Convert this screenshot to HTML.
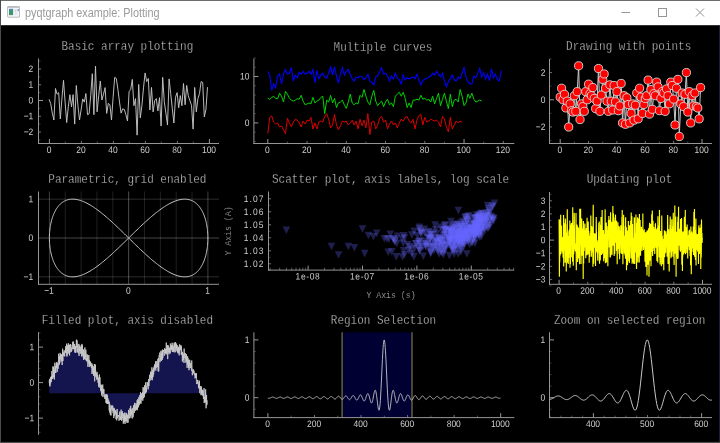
<!DOCTYPE html>
<html lang="en">
<head>
<meta charset="utf-8">
<title>pyqtgraph example: Plotting</title>
<style>
html,body{margin:0;padding:0;background:#000;}
body{width:720px;height:443px;overflow:hidden;position:relative;font-family:"Liberation Sans",sans-serif;}
#win{position:absolute;left:0;top:0;width:720px;height:443px;display:block;will-change:transform;}
.tt{font-family:"Liberation Mono",monospace;font-size:11px;fill:#d6d6d6;text-anchor:middle;stroke:#000;stroke-width:0.3px;}
.tk{font-family:"Liberation Sans",sans-serif;font-size:9.4px;fill:#cecece;}
.al{font-family:"Liberation Mono",monospace;font-size:8.2px;fill:#c4c4c4;text-anchor:middle;stroke:#000;stroke-width:0.22px;}
.cap{font-family:"Liberation Sans",sans-serif;font-size:12px;fill:#9a9a9a;}
</style>
</head>
<body>
<svg id="win" width="720" height="443" viewBox="0 0 720 443">

<rect x="0" y="0" width="720" height="443" fill="#000"/>
<rect x="0" y="0" width="720" height="25.2" fill="#fff"/>
<rect x="0" y="0" width="720" height="0.9" fill="#5c5c5c"/>
<rect x="0" y="0" width="1" height="443" fill="#4a4b4e"/>
<rect x="719" y="26" width="1" height="417" fill="#1c1c3a"/>
<rect x="0" y="441.9" width="720" height="1.1" fill="#4e4e4e"/>
<g>
<rect x="7.5" y="6.8" width="12" height="10.4" rx="0.8" fill="#f3f4f6" stroke="#bcbdc2" stroke-width="1"/>
<rect x="7.2" y="6.3" width="12.6" height="1.5" rx="0.5" fill="#b9bac0"/>
<rect x="9" y="9.2" width="4.1" height="5.9" fill="#3e9474"/>
<rect x="9" y="8.8" width="4.1" height="1" fill="#4f86c4"/>
<rect x="17.5" y="9.1" width="1.5" height="2" fill="#7d9fd6"/>
<rect x="14.4" y="9.4" width="2.4" height="5.4" fill="#e4e8ef"/>
<rect x="15.2" y="10.2" width="0.8" height="0.8" fill="#e9a0a0"/>
<rect x="19" y="16" width="0.8" height="0.8" fill="#6fc08a"/>
</g>
<text x="25" y="16.6" class="cap" textLength="134.5" lengthAdjust="spacingAndGlyphs">pyqtgraph example: Plotting</text>
<line x1="621.5" y1="12.5" x2="630" y2="12.5" stroke="#959595" stroke-width="1"/>
<rect x="658.5" y="8.5" width="8" height="8" fill="none" stroke="#959595" stroke-width="1"/>
<path d="M696 8.5 L704 16.5 M704 8.5 L696 16.5" stroke="#959595" stroke-width="1" fill="none"/>
<text transform="translate(127.4 50.3) scale(1 1.2)" class="tt">Basic array plotting</text>
<line x1="38.5" y1="58.5" x2="38.5" y2="144" stroke="#969696" stroke-width="1" opacity="1"/>
<line x1="38" y1="143.5" x2="219" y2="143.5" stroke="#969696" stroke-width="1" opacity="1"/>
<line x1="49.4" y1="139" x2="49.4" y2="143.5" stroke="#969696" stroke-width="1" opacity="1"/>
<text transform="translate(49 152.9) rotate(0.05) scale(0.9 1.0)" class="tk" text-anchor="middle">0</text>
<line x1="81.4" y1="140.9" x2="81.4" y2="143.5" stroke="#969696" stroke-width="1" opacity="0.75"/>
<text transform="translate(81 152.9) rotate(0.05) scale(0.9 1.0)" class="tk" text-anchor="middle">20</text>
<line x1="113.4" y1="140.9" x2="113.4" y2="143.5" stroke="#969696" stroke-width="1" opacity="0.75"/>
<text transform="translate(113 152.9) rotate(0.05) scale(0.9 1.0)" class="tk" text-anchor="middle">40</text>
<line x1="145.4" y1="140.9" x2="145.4" y2="143.5" stroke="#969696" stroke-width="1" opacity="0.75"/>
<text transform="translate(145 152.9) rotate(0.05) scale(0.9 1.0)" class="tk" text-anchor="middle">60</text>
<line x1="177.4" y1="140.9" x2="177.4" y2="143.5" stroke="#969696" stroke-width="1" opacity="0.75"/>
<text transform="translate(177 152.9) rotate(0.05) scale(0.9 1.0)" class="tk" text-anchor="middle">80</text>
<line x1="209.4" y1="139" x2="209.4" y2="143.5" stroke="#969696" stroke-width="1" opacity="1"/>
<text transform="translate(209 152.9) rotate(0.05) scale(0.9 1.0)" class="tk" text-anchor="middle">100</text>
<line x1="65.4" y1="141.5" x2="65.4" y2="143.5" stroke="#969696" stroke-width="1" opacity="0.5"/>
<line x1="97.4" y1="141.5" x2="97.4" y2="143.5" stroke="#969696" stroke-width="1" opacity="0.5"/>
<line x1="129.4" y1="141.5" x2="129.4" y2="143.5" stroke="#969696" stroke-width="1" opacity="0.5"/>
<line x1="161.4" y1="141.5" x2="161.4" y2="143.5" stroke="#969696" stroke-width="1" opacity="0.5"/>
<line x1="193.4" y1="141.5" x2="193.4" y2="143.5" stroke="#969696" stroke-width="1" opacity="0.5"/>
<line x1="38.5" y1="69" x2="41.1" y2="69" stroke="#969696" stroke-width="1" opacity="0.75"/>
<text transform="translate(33.3 72.1) rotate(0.05) scale(0.9 1.0)" class="tk" text-anchor="end">2</text>
<line x1="38.5" y1="84.75" x2="41.1" y2="84.75" stroke="#969696" stroke-width="1" opacity="0.75"/>
<text transform="translate(33.3 87.85) rotate(0.05) scale(0.9 1.0)" class="tk" text-anchor="end">1</text>
<line x1="38.5" y1="100.5" x2="43" y2="100.5" stroke="#969696" stroke-width="1" opacity="1"/>
<text transform="translate(33.3 103.6) rotate(0.05) scale(0.9 1.0)" class="tk" text-anchor="end">0</text>
<line x1="38.5" y1="116.25" x2="41.1" y2="116.25" stroke="#969696" stroke-width="1" opacity="0.75"/>
<text transform="translate(33.3 119.35) rotate(0.05) scale(0.9 1.0)" class="tk" text-anchor="end">−1</text>
<line x1="38.5" y1="132" x2="41.1" y2="132" stroke="#969696" stroke-width="1" opacity="0.75"/>
<text transform="translate(33.3 135.1) rotate(0.05) scale(0.9 1.0)" class="tk" text-anchor="end">−2</text>
<line x1="38.5" y1="61.12" x2="40.5" y2="61.12" stroke="#969696" stroke-width="1" opacity="0.4"/>
<line x1="38.5" y1="76.88" x2="40.5" y2="76.88" stroke="#969696" stroke-width="1" opacity="0.4"/>
<line x1="38.5" y1="92.62" x2="40.5" y2="92.62" stroke="#969696" stroke-width="1" opacity="0.4"/>
<line x1="38.5" y1="108.38" x2="40.5" y2="108.38" stroke="#969696" stroke-width="1" opacity="0.4"/>
<line x1="38.5" y1="124.12" x2="40.5" y2="124.12" stroke="#969696" stroke-width="1" opacity="0.4"/>
<line x1="38.5" y1="139.88" x2="40.5" y2="139.88" stroke="#969696" stroke-width="1" opacity="0.4"/>
<polyline fill="none" stroke="#c4c4c4" stroke-width="0.95" stroke-linejoin="round" points="49.1,99.24 50.7,103.65 52.3,113.1 53.9,120.03 55.5,88.53 57.1,94.2 58.7,92.62 60.3,118.93 61.9,98.92 63.5,80.34 65.1,102.08 66.7,122.55 68.3,106.8 69.9,94.67 71.5,106.8 73.1,94.67 74.7,124.12 76.3,85.54 77.9,105.22 79.5,120.03 81.1,109.95 82.7,98.92 84.3,102.08 85.9,93.57 87.5,114.67 89.1,113.89 90.7,95.78 92.3,73.72 93.9,114.67 95.5,66.16 97.1,111.84 98.7,95.78 100.3,80.97 101.9,100.03 103.5,94.2 105.1,87.59 106.7,113.41 108.3,103.33 109.9,104.75 111.5,120.03 113.1,97.35 114.7,77.35 116.3,78.45 117.9,89.47 119.5,102.08 121.1,113.1 122.7,108.85 124.3,109.48 125.9,114.67 127.5,120.97 129.1,91.52 130.7,89.47 132.3,79.39 133.9,105.7 135.5,98.61 137.1,135.15 138.7,84.44 140.3,117.83 141.9,105.7 143.5,87.9 145.1,72.94 146.7,81.6 148.3,78.45 149.9,109.95 151.5,87.43 153.1,111.84 154.7,100.66 156.3,98.61 157.9,110.89 159.5,97.67 161.1,126.02 162.7,77.35 164.3,101.76 165.9,113.1 167.5,125.07 169.1,78.92 170.7,93.57 172.3,108.38 173.9,123.02 175.5,97.35 177.1,92.62 178.7,107.75 180.3,95.62 181.9,105.7 183.5,83.49 185.1,104.75 186.7,85.38 188.3,95.78 189.9,100.66 191.5,105.22 193.1,129.16 194.7,87.43 196.3,111.84 197.9,98.61 199.5,93.57 201.1,81.6 202.7,82.39 204.3,116.88 205.9,109.79 207.5,87.11"/>
<text transform="translate(383 50.6) scale(1 1.2)" class="tt">Multiple curves</text>
<line x1="253.9" y1="58.5" x2="253.9" y2="144" stroke="#969696" stroke-width="1" opacity="1"/>
<line x1="253.4" y1="143.5" x2="514.3" y2="143.5" stroke="#969696" stroke-width="1" opacity="1"/>
<line x1="267.8" y1="139" x2="267.8" y2="143.5" stroke="#969696" stroke-width="1" opacity="1"/>
<text transform="translate(267.4 152.9) rotate(0.05) scale(0.9 1.0)" class="tk" text-anchor="middle">0</text>
<line x1="307.05" y1="140.9" x2="307.05" y2="143.5" stroke="#969696" stroke-width="1" opacity="0.75"/>
<text transform="translate(306.65 152.9) rotate(0.05) scale(0.9 1.0)" class="tk" text-anchor="middle">20</text>
<line x1="346.3" y1="140.9" x2="346.3" y2="143.5" stroke="#969696" stroke-width="1" opacity="0.75"/>
<text transform="translate(345.9 152.9) rotate(0.05) scale(0.9 1.0)" class="tk" text-anchor="middle">40</text>
<line x1="385.55" y1="140.9" x2="385.55" y2="143.5" stroke="#969696" stroke-width="1" opacity="0.75"/>
<text transform="translate(385.15 152.9) rotate(0.05) scale(0.9 1.0)" class="tk" text-anchor="middle">60</text>
<line x1="424.8" y1="140.9" x2="424.8" y2="143.5" stroke="#969696" stroke-width="1" opacity="0.75"/>
<text transform="translate(424.4 152.9) rotate(0.05) scale(0.9 1.0)" class="tk" text-anchor="middle">80</text>
<line x1="464.05" y1="139" x2="464.05" y2="143.5" stroke="#969696" stroke-width="1" opacity="1"/>
<text transform="translate(463.65 152.9) rotate(0.05) scale(0.9 1.0)" class="tk" text-anchor="middle">100</text>
<line x1="503.3" y1="140.9" x2="503.3" y2="143.5" stroke="#969696" stroke-width="1" opacity="0.75"/>
<text transform="translate(502.9 152.9) rotate(0.05) scale(0.9 1.0)" class="tk" text-anchor="middle">120</text>
<line x1="287.43" y1="141.5" x2="287.43" y2="143.5" stroke="#969696" stroke-width="1" opacity="0.5"/>
<line x1="326.68" y1="141.5" x2="326.68" y2="143.5" stroke="#969696" stroke-width="1" opacity="0.5"/>
<line x1="365.93" y1="141.5" x2="365.93" y2="143.5" stroke="#969696" stroke-width="1" opacity="0.5"/>
<line x1="405.18" y1="141.5" x2="405.18" y2="143.5" stroke="#969696" stroke-width="1" opacity="0.5"/>
<line x1="444.43" y1="141.5" x2="444.43" y2="143.5" stroke="#969696" stroke-width="1" opacity="0.5"/>
<line x1="483.68" y1="141.5" x2="483.68" y2="143.5" stroke="#969696" stroke-width="1" opacity="0.5"/>
<line x1="253.9" y1="76.5" x2="258.4" y2="76.5" stroke="#969696" stroke-width="1" opacity="1"/>
<text transform="translate(249.5 79.6) rotate(0.05) scale(0.9 1.0)" class="tk" text-anchor="end">10</text>
<line x1="253.9" y1="122.9" x2="258.4" y2="122.9" stroke="#969696" stroke-width="1" opacity="1"/>
<text transform="translate(249.5 126) rotate(0.05) scale(0.9 1.0)" class="tk" text-anchor="end">0</text>
<line x1="253.9" y1="141.46" x2="255.9" y2="141.46" stroke="#969696" stroke-width="1" opacity="0.4"/>
<line x1="253.9" y1="132.18" x2="255.9" y2="132.18" stroke="#969696" stroke-width="1" opacity="0.4"/>
<line x1="253.9" y1="113.62" x2="255.9" y2="113.62" stroke="#969696" stroke-width="1" opacity="0.4"/>
<line x1="253.9" y1="104.34" x2="255.9" y2="104.34" stroke="#969696" stroke-width="1" opacity="0.4"/>
<line x1="253.9" y1="95.06" x2="255.9" y2="95.06" stroke="#969696" stroke-width="1" opacity="0.4"/>
<line x1="253.9" y1="85.78" x2="255.9" y2="85.78" stroke="#969696" stroke-width="1" opacity="0.4"/>
<line x1="253.9" y1="67.22" x2="255.9" y2="67.22" stroke="#969696" stroke-width="1" opacity="0.4"/>
<line x1="253.9" y1="57.94" x2="255.9" y2="57.94" stroke="#969696" stroke-width="1" opacity="0.4"/>
<polyline fill="none" stroke="#e80000" stroke-width="0.95" points="267.8,133.57 269.76,117.33 271.73,115.94 273.69,122.11 275.65,124.06 277.61,122.9 279.57,126.89 281.54,125.96 283.5,129.86 285.46,133.57 287.43,118.26 289.39,122.9 291.35,126.89 293.31,122.11 295.28,119.19 297.24,120.12 299.2,122.9 301.16,126.89 303.12,121.04 305.09,124.06 307.05,120.12 309.01,121.04 310.98,117.33 312.94,128.93 314.9,122.9 316.86,128.93 318.82,122.11 320.79,121.04 322.75,122.11 324.71,116.4 326.68,113.62 328.64,119.19 330.6,127.86 332.56,124.99 334.52,114.55 336.49,124.99 338.45,129.86 340.41,125.96 342.38,121.04 344.34,122.11 346.3,121.04 348.26,124.99 350.23,122.9 352.19,120.12 354.15,124.99 356.11,121.04 358.07,128.93 360.04,119.19 362,125.96 363.96,120.12 365.93,127.86 367.89,113.62 369.85,134.5 371.81,122.11 373.77,121.04 375.74,128.93 377.7,124.99 379.66,118.26 381.62,116.4 383.59,122.11 385.55,120.12 387.51,128.93 389.48,124.06 391.44,121.04 393.4,124.99 395.36,122.9 397.33,127.86 399.29,122.9 401.25,119.19 403.21,121.04 405.18,117.33 407.14,116.4 409.1,121.04 411.06,122.9 413.02,119.19 414.99,128.93 416.95,120.12 418.91,115.48 420.88,114.55 422.84,124.99 424.8,117.33 426.76,122.11 428.73,121.04 430.69,119.19 432.65,120.12 434.61,121.04 436.58,120.12 438.54,122.11 440.5,126.89 442.46,116.4 444.43,119.19 446.39,126.89 448.35,131.72 450.31,117.33 452.27,128.93 454.24,124.99 456.2,121.04 458.16,122.9 460.12,121.04 462.09,122.11"/>
<polyline fill="none" stroke="#00dc00" stroke-width="0.95" points="267.8,98.31 269.76,99.24 271.73,97.38 273.69,96.45 275.65,98.31 277.61,98.77 279.57,93.2 281.54,96.22 283.5,102.02 285.46,91.35 287.43,94.13 289.39,98.31 291.35,100.16 293.31,101.09 295.28,100.16 297.24,98.77 299.2,99.24 301.16,95.29 303.12,101.09 305.09,104.8 307.05,103.88 309.01,102.95 310.98,103.88 312.94,97.38 314.9,102.95 316.86,101.09 318.82,100.16 320.79,97.61 322.75,96.22 324.71,113.62 326.68,100.16 328.64,102.02 330.6,95.29 332.56,102.95 334.52,98.31 336.49,107.59 338.45,102.95 340.41,102.02 342.38,100.16 344.34,104.8 346.3,108.52 348.26,102.02 350.23,94.13 352.19,102.95 354.15,104.8 356.11,102.95 358.07,103.88 360.04,95.29 362,97.38 363.96,89.49 365.93,96.22 367.89,102.02 369.85,104.8 371.81,96.22 373.77,90.42 375.74,101.09 377.7,105.73 379.66,102.95 381.62,101.09 383.59,106.66 385.55,102.02 387.51,99.24 389.48,104.8 391.44,102.95 393.4,106.66 395.36,96.22 397.33,94.13 399.29,92.28 401.25,96.22 403.21,92.28 405.18,98.31 407.14,107.59 409.1,102.95 411.06,107.59 413.02,100.16 414.99,100.16 416.95,99.24 418.91,100.16 420.88,95.29 422.84,99.24 424.8,98.31 426.76,100.16 428.73,99.24 430.69,102.02 432.65,96.22 434.61,103.88 436.58,98.31 438.54,93.2 440.5,105.73 442.46,99.24 444.43,93.2 446.39,101.09 448.35,108.52 450.31,94.13 452.27,106.66 454.24,100.16 456.2,99.24 458.16,102.02 460.12,89.49 462.09,96.22 464.05,105.73 466.01,102.95 467.98,94.13 469.94,98.31 471.9,93.2 473.86,99.24 475.82,102.02 477.79,101.09 479.75,100.16 481.71,101.09"/>
<polyline fill="none" stroke="#00f" stroke-width="1.1" points="267.8,71.4 269.76,75.11 271.73,90.42 273.69,83.92 275.65,87.64 277.61,76.04 279.57,74.18 281.54,83.92 283.5,74.18 285.46,69.54 287.43,74.18 289.39,73.25 291.35,67.68 293.31,81.14 295.28,75.11 297.24,77.89 299.2,72.32 301.16,74.18 303.12,71.4 305.09,74.18 307.05,73.25 309.01,71.4 310.98,74.18 312.94,69.54 314.9,83 316.86,70.47 318.82,78.82 320.79,75.11 322.75,73.25 324.71,76.96 326.68,77.89 328.64,73.25 330.6,66.76 332.56,75.11 334.52,66.76 336.49,76.04 338.45,83 340.41,74.18 342.38,67.68 344.34,75.11 346.3,71.4 348.26,69.54 350.23,74.18 352.19,78.82 354.15,81.14 356.11,76.96 358.07,77.89 360.04,76.04 362,76.96 363.96,79.75 365.93,77.89 367.89,74.18 369.85,81.14 371.81,82.07 373.77,84.85 375.74,76.96 377.7,76.04 379.66,71.86 381.62,67.68 383.59,74.18 385.55,73.25 387.51,76.04 389.48,80.91 391.44,76.04 393.4,78.82 395.36,73.25 397.33,77.89 399.29,79.75 401.25,83.92 403.21,75.11 405.18,79.75 407.14,77.89 409.1,78.82 411.06,77.89 413.02,76.96 414.99,78.82 416.95,74.18 418.91,79.75 420.88,84.85 422.84,80.91 424.8,78.82 426.76,78.82 428.73,76.96 430.69,76.04 432.65,73.25 434.61,75.11 436.58,71.4 438.54,74.18 440.5,76.96 442.46,73.25 444.43,80.91 446.39,86.71 448.35,81.84 450.31,78.82 452.27,75.11 454.24,79.75 456.2,80.91 458.16,76.96 460.12,78.82 462.09,73.25 464.05,67.68 466.01,76.96 467.98,81.84 469.94,83.92 471.9,83.92 473.86,76.04 475.82,77.89 477.79,73.25 479.75,68.61 481.71,76.96 483.68,72.32 485.64,78.82 487.6,74.18 489.56,80.91 491.52,68.61 493.49,77.89 495.45,74.18 497.41,79.75 499.38,80.91 501.34,70.47"/>
<text transform="translate(628.7 50.3) scale(1 1.2)" class="tt">Drawing with points</text>
<line x1="549.5" y1="59" x2="549.5" y2="144" stroke="#969696" stroke-width="1" opacity="1"/>
<line x1="549" y1="143.5" x2="712" y2="143.5" stroke="#969696" stroke-width="1" opacity="1"/>
<line x1="560.2" y1="139" x2="560.2" y2="143.5" stroke="#969696" stroke-width="1" opacity="1"/>
<text transform="translate(559.8 152.9) rotate(0.05) scale(0.9 1.0)" class="tk" text-anchor="middle">0</text>
<line x1="588.56" y1="140.9" x2="588.56" y2="143.5" stroke="#969696" stroke-width="1" opacity="0.75"/>
<text transform="translate(588.16 152.9) rotate(0.05) scale(0.9 1.0)" class="tk" text-anchor="middle">20</text>
<line x1="616.92" y1="140.9" x2="616.92" y2="143.5" stroke="#969696" stroke-width="1" opacity="0.75"/>
<text transform="translate(616.52 152.9) rotate(0.05) scale(0.9 1.0)" class="tk" text-anchor="middle">40</text>
<line x1="645.28" y1="140.9" x2="645.28" y2="143.5" stroke="#969696" stroke-width="1" opacity="0.75"/>
<text transform="translate(644.88 152.9) rotate(0.05) scale(0.9 1.0)" class="tk" text-anchor="middle">60</text>
<line x1="673.64" y1="140.9" x2="673.64" y2="143.5" stroke="#969696" stroke-width="1" opacity="0.75"/>
<text transform="translate(673.24 152.9) rotate(0.05) scale(0.9 1.0)" class="tk" text-anchor="middle">80</text>
<line x1="702" y1="139" x2="702" y2="143.5" stroke="#969696" stroke-width="1" opacity="1"/>
<text transform="translate(701.6 152.9) rotate(0.05) scale(0.9 1.0)" class="tk" text-anchor="middle">100</text>
<line x1="574.38" y1="141.5" x2="574.38" y2="143.5" stroke="#969696" stroke-width="1" opacity="0.5"/>
<line x1="602.74" y1="141.5" x2="602.74" y2="143.5" stroke="#969696" stroke-width="1" opacity="0.5"/>
<line x1="631.1" y1="141.5" x2="631.1" y2="143.5" stroke="#969696" stroke-width="1" opacity="0.5"/>
<line x1="659.46" y1="141.5" x2="659.46" y2="143.5" stroke="#969696" stroke-width="1" opacity="0.5"/>
<line x1="687.82" y1="141.5" x2="687.82" y2="143.5" stroke="#969696" stroke-width="1" opacity="0.5"/>
<line x1="549.5" y1="72.6" x2="552.1" y2="72.6" stroke="#969696" stroke-width="1" opacity="0.75"/>
<text transform="translate(545.4 75.7) rotate(0.05) scale(0.9 1.0)" class="tk" text-anchor="end">2</text>
<line x1="549.5" y1="99.8" x2="554" y2="99.8" stroke="#969696" stroke-width="1" opacity="1"/>
<text transform="translate(545.4 102.9) rotate(0.05) scale(0.9 1.0)" class="tk" text-anchor="end">0</text>
<line x1="549.5" y1="127" x2="552.1" y2="127" stroke="#969696" stroke-width="1" opacity="0.75"/>
<text transform="translate(545.4 130.1) rotate(0.05) scale(0.9 1.0)" class="tk" text-anchor="end">−2</text>
<line x1="549.5" y1="140.6" x2="551.5" y2="140.6" stroke="#969696" stroke-width="1" opacity="0.4"/>
<line x1="549.5" y1="113.4" x2="551.5" y2="113.4" stroke="#969696" stroke-width="1" opacity="0.4"/>
<line x1="549.5" y1="86.2" x2="551.5" y2="86.2" stroke="#969696" stroke-width="1" opacity="0.4"/>
<line x1="549.5" y1="59" x2="551.5" y2="59" stroke="#969696" stroke-width="1" opacity="0.4"/>
<polyline fill="none" stroke="#c8c8c8" stroke-width="1" points="560.2,97.08 561.62,88.24 563.04,99.8 564.45,94.36 565.87,107.96 567.29,101.16 568.71,127 570.13,103.88 571.54,110.68 572.96,112.04 574.38,95.72 575.8,111.36 577.22,91.64 578.63,65.8 580.05,119.52 581.47,103.88 582.89,106.6 584.31,111.36 585.72,91.64 587.14,99.8 588.56,84.16 589.98,93.68 591.4,95.72 592.81,87.56 594.23,98.44 595.65,108.64 597.07,101.16 598.49,68.52 599.9,111.36 601.32,95.04 602.74,79.4 604.16,73.96 605.58,88.24 606.99,101.16 608.41,111.36 609.83,84.84 611.25,101.16 612.67,110 614.08,85.52 615.5,101.84 616.92,91.64 618.34,110.68 619.76,105.92 621.17,83.48 622.59,122.92 624.01,95.72 625.43,124.28 626.85,97.76 628.26,104.56 629.68,122.92 631.1,113.4 632.52,103.88 633.94,120.2 635.35,105.24 636.77,93 638.19,118.84 639.61,88.24 641.03,97.08 642.44,113.4 643.86,104.56 645.28,98.44 646.7,95.72 648.12,80.08 649.53,114.08 650.95,89.6 652.37,109.32 653.79,93.68 655.21,95.72 656.62,82.12 658.04,86.88 659.46,110.68 660.88,98.44 662.3,91.64 663.71,93 665.13,111.36 666.55,88.92 667.97,95.72 669.39,103.88 670.8,82.12 672.22,85.52 673.64,99.12 675.06,124.96 676.48,88.24 677.89,79.4 679.31,136.52 680.73,103.88 682.15,93 683.57,106.6 684.98,94.36 686.4,72.6 687.82,112.04 689.24,91.64 690.66,122.92 692.07,95.72 693.49,105.92 694.91,93 696.33,106.6 697.75,107.96 699.16,118.84 700.58,87.56"/>
<g fill="#f00" stroke="#d8d8d8" stroke-width="0.9">
<circle cx="560.2" cy="97.08" r="4.1"/>
<circle cx="561.62" cy="88.24" r="4.1"/>
<circle cx="563.04" cy="99.8" r="4.1"/>
<circle cx="564.45" cy="94.36" r="4.1"/>
<circle cx="565.87" cy="107.96" r="4.1"/>
<circle cx="567.29" cy="101.16" r="4.1"/>
<circle cx="568.71" cy="127" r="4.1"/>
<circle cx="570.13" cy="103.88" r="4.1"/>
<circle cx="571.54" cy="110.68" r="4.1"/>
<circle cx="572.96" cy="112.04" r="4.1"/>
<circle cx="574.38" cy="95.72" r="4.1"/>
<circle cx="575.8" cy="111.36" r="4.1"/>
<circle cx="577.22" cy="91.64" r="4.1"/>
<circle cx="578.63" cy="65.8" r="4.1"/>
<circle cx="580.05" cy="119.52" r="4.1"/>
<circle cx="581.47" cy="103.88" r="4.1"/>
<circle cx="582.89" cy="106.6" r="4.1"/>
<circle cx="584.31" cy="111.36" r="4.1"/>
<circle cx="585.72" cy="91.64" r="4.1"/>
<circle cx="587.14" cy="99.8" r="4.1"/>
<circle cx="588.56" cy="84.16" r="4.1"/>
<circle cx="589.98" cy="93.68" r="4.1"/>
<circle cx="591.4" cy="95.72" r="4.1"/>
<circle cx="592.81" cy="87.56" r="4.1"/>
<circle cx="594.23" cy="98.44" r="4.1"/>
<circle cx="595.65" cy="108.64" r="4.1"/>
<circle cx="597.07" cy="101.16" r="4.1"/>
<circle cx="598.49" cy="68.52" r="4.1"/>
<circle cx="599.9" cy="111.36" r="4.1"/>
<circle cx="601.32" cy="95.04" r="4.1"/>
<circle cx="602.74" cy="79.4" r="4.1"/>
<circle cx="604.16" cy="73.96" r="4.1"/>
<circle cx="605.58" cy="88.24" r="4.1"/>
<circle cx="606.99" cy="101.16" r="4.1"/>
<circle cx="608.41" cy="111.36" r="4.1"/>
<circle cx="609.83" cy="84.84" r="4.1"/>
<circle cx="611.25" cy="101.16" r="4.1"/>
<circle cx="612.67" cy="110" r="4.1"/>
<circle cx="614.08" cy="85.52" r="4.1"/>
<circle cx="615.5" cy="101.84" r="4.1"/>
<circle cx="616.92" cy="91.64" r="4.1"/>
<circle cx="618.34" cy="110.68" r="4.1"/>
<circle cx="619.76" cy="105.92" r="4.1"/>
<circle cx="621.17" cy="83.48" r="4.1"/>
<circle cx="622.59" cy="122.92" r="4.1"/>
<circle cx="624.01" cy="95.72" r="4.1"/>
<circle cx="625.43" cy="124.28" r="4.1"/>
<circle cx="626.85" cy="97.76" r="4.1"/>
<circle cx="628.26" cy="104.56" r="4.1"/>
<circle cx="629.68" cy="122.92" r="4.1"/>
<circle cx="631.1" cy="113.4" r="4.1"/>
<circle cx="632.52" cy="103.88" r="4.1"/>
<circle cx="633.94" cy="120.2" r="4.1"/>
<circle cx="635.35" cy="105.24" r="4.1"/>
<circle cx="636.77" cy="93" r="4.1"/>
<circle cx="638.19" cy="118.84" r="4.1"/>
<circle cx="639.61" cy="88.24" r="4.1"/>
<circle cx="641.03" cy="97.08" r="4.1"/>
<circle cx="642.44" cy="113.4" r="4.1"/>
<circle cx="643.86" cy="104.56" r="4.1"/>
<circle cx="645.28" cy="98.44" r="4.1"/>
<circle cx="646.7" cy="95.72" r="4.1"/>
<circle cx="648.12" cy="80.08" r="4.1"/>
<circle cx="649.53" cy="114.08" r="4.1"/>
<circle cx="650.95" cy="89.6" r="4.1"/>
<circle cx="652.37" cy="109.32" r="4.1"/>
<circle cx="653.79" cy="93.68" r="4.1"/>
<circle cx="655.21" cy="95.72" r="4.1"/>
<circle cx="656.62" cy="82.12" r="4.1"/>
<circle cx="658.04" cy="86.88" r="4.1"/>
<circle cx="659.46" cy="110.68" r="4.1"/>
<circle cx="660.88" cy="98.44" r="4.1"/>
<circle cx="662.3" cy="91.64" r="4.1"/>
<circle cx="663.71" cy="93" r="4.1"/>
<circle cx="665.13" cy="111.36" r="4.1"/>
<circle cx="666.55" cy="88.92" r="4.1"/>
<circle cx="667.97" cy="95.72" r="4.1"/>
<circle cx="669.39" cy="103.88" r="4.1"/>
<circle cx="670.8" cy="82.12" r="4.1"/>
<circle cx="672.22" cy="85.52" r="4.1"/>
<circle cx="673.64" cy="99.12" r="4.1"/>
<circle cx="675.06" cy="124.96" r="4.1"/>
<circle cx="676.48" cy="88.24" r="4.1"/>
<circle cx="677.89" cy="79.4" r="4.1"/>
<circle cx="679.31" cy="136.52" r="4.1"/>
<circle cx="680.73" cy="103.88" r="4.1"/>
<circle cx="682.15" cy="93" r="4.1"/>
<circle cx="683.57" cy="106.6" r="4.1"/>
<circle cx="684.98" cy="94.36" r="4.1"/>
<circle cx="686.4" cy="72.6" r="4.1"/>
<circle cx="687.82" cy="112.04" r="4.1"/>
<circle cx="689.24" cy="91.64" r="4.1"/>
<circle cx="690.66" cy="122.92" r="4.1"/>
<circle cx="692.07" cy="95.72" r="4.1"/>
<circle cx="693.49" cy="105.92" r="4.1"/>
<circle cx="694.91" cy="93" r="4.1"/>
<circle cx="696.33" cy="106.6" r="4.1"/>
<circle cx="697.75" cy="107.96" r="4.1"/>
<circle cx="699.16" cy="118.84" r="4.1"/>
<circle cx="700.58" cy="87.56" r="4.1"/>
</g>
<text transform="translate(127.4 182.7) scale(1 1.2)" class="tt">Parametric, grid enabled</text>
<line x1="65.25" y1="191.5" x2="65.25" y2="284.3" stroke="#fff" stroke-width="1" opacity="0.12"/>
<line x1="81.1" y1="191.5" x2="81.1" y2="284.3" stroke="#fff" stroke-width="1" opacity="0.12"/>
<line x1="96.95" y1="191.5" x2="96.95" y2="284.3" stroke="#fff" stroke-width="1" opacity="0.12"/>
<line x1="112.8" y1="191.5" x2="112.8" y2="284.3" stroke="#fff" stroke-width="1" opacity="0.12"/>
<line x1="144.5" y1="191.5" x2="144.5" y2="284.3" stroke="#fff" stroke-width="1" opacity="0.12"/>
<line x1="160.35" y1="191.5" x2="160.35" y2="284.3" stroke="#fff" stroke-width="1" opacity="0.12"/>
<line x1="176.2" y1="191.5" x2="176.2" y2="284.3" stroke="#fff" stroke-width="1" opacity="0.12"/>
<line x1="192.05" y1="191.5" x2="192.05" y2="284.3" stroke="#fff" stroke-width="1" opacity="0.12"/>
<line x1="49.4" y1="191.5" x2="49.4" y2="284.3" stroke="#fff" stroke-width="1" opacity="0.24"/>
<line x1="128.65" y1="191.5" x2="128.65" y2="284.3" stroke="#fff" stroke-width="1" opacity="0.3"/>
<line x1="207.9" y1="191.5" x2="207.9" y2="284.3" stroke="#fff" stroke-width="1" opacity="0.24"/>
<line x1="38.5" y1="276.85" x2="219" y2="276.85" stroke="#fff" stroke-width="1" opacity="0.17"/>
<line x1="38.5" y1="238" x2="219" y2="238" stroke="#fff" stroke-width="1" opacity="0.27"/>
<line x1="38.5" y1="199.15" x2="219" y2="199.15" stroke="#fff" stroke-width="1" opacity="0.17"/>
<line x1="38.5" y1="276.85" x2="219" y2="276.85" stroke="#fff" stroke-width="1" opacity="0.0"/>
<line x1="38.5" y1="199.15" x2="219" y2="199.15" stroke="#fff" stroke-width="1" opacity="0.0"/>
<line x1="38.5" y1="191.5" x2="38.5" y2="284.8" stroke="#969696" stroke-width="1" opacity="1"/>
<line x1="38" y1="284.3" x2="219" y2="284.3" stroke="#969696" stroke-width="1" opacity="1"/>
<text transform="translate(49 293.7) rotate(0.05) scale(0.9 1.0)" class="tk" text-anchor="middle">−1</text>
<text transform="translate(128.25 293.7) rotate(0.05) scale(0.9 1.0)" class="tk" text-anchor="middle">0</text>
<text transform="translate(207.5 293.7) rotate(0.05) scale(0.9 1.0)" class="tk" text-anchor="middle">1</text>
<text transform="translate(33.2 202.25) rotate(0.05) scale(0.9 1.0)" class="tk" text-anchor="end">1</text>
<text transform="translate(33.2 241.1) rotate(0.05) scale(0.9 1.0)" class="tk" text-anchor="end">0</text>
<text transform="translate(33.2 279.95) rotate(0.05) scale(0.9 1.0)" class="tk" text-anchor="end">−1</text>
<polyline fill="none" stroke="#c8c8c8" stroke-width="1" points="207.9,238 207.89,236.78 207.86,235.55 207.81,234.33 207.74,233.12 207.65,231.91 207.55,230.7 207.42,229.5 207.27,228.31 207.11,227.13 206.92,225.97 206.71,224.81 206.49,223.66 206.25,222.53 205.98,221.42 205.7,220.32 205.4,219.24 205.08,218.18 204.74,217.14 204.38,216.12 204,215.12 203.61,214.14 203.19,213.18 202.76,212.26 202.31,211.35 201.84,210.47 201.35,209.63 200.84,208.8 200.32,208.01 199.78,207.25 199.22,206.52 198.64,205.81 198.05,205.15 197.44,204.51 196.81,203.91 196.16,203.34 195.5,202.8 194.82,202.3 194.13,201.84 193.42,201.41 192.69,201.01 191.95,200.66 191.19,200.34 190.42,200.06 189.63,199.81 188.82,199.61 188,199.44 187.17,199.31 186.32,199.22 185.46,199.16 184.58,199.15 183.69,199.17 182.78,199.24 181.86,199.34 180.93,199.48 179.99,199.65 179.03,199.87 178.06,200.12 177.08,200.42 176.09,200.74 175.08,201.11 174.06,201.51 173.03,201.95 172,202.42 170.95,202.93 169.88,203.48 168.81,204.05 167.73,204.66 166.64,205.31 165.54,205.99 164.43,206.7 163.32,207.44 162.19,208.21 161.05,209.01 159.91,209.84 158.76,210.69 157.6,211.58 156.44,212.49 155.27,213.42 154.09,214.38 152.9,215.36 151.71,216.37 150.51,217.4 149.31,218.44 148.1,219.51 146.89,220.59 145.68,221.7 144.46,222.82 143.23,223.95 142,225.1 140.77,226.26 139.54,227.43 138.3,228.61 137.06,229.8 135.82,231 134.57,232.21 133.33,233.42 132.08,234.64 130.83,235.86 129.59,237.08 128.34,238.31 127.09,239.53 125.84,240.75 124.6,241.97 123.35,243.18 122.11,244.39 120.86,245.6 119.62,246.79 118.38,247.98 117.15,249.16 115.91,250.32 114.68,251.48 113.46,252.62 112.23,253.75 111.02,254.86 109.8,255.95 108.59,257.03 107.39,258.08 106.19,259.12 104.99,260.14 103.8,261.13 102.62,262.1 101.45,263.05 100.28,263.97 99.12,264.87 97.96,265.74 96.82,266.58 95.68,267.4 94.55,268.18 93.42,268.94 92.31,269.66 91.21,270.36 90.11,271.02 89.03,271.65 87.95,272.24 86.88,272.8 85.83,273.33 84.78,273.82 83.75,274.28 82.73,274.7 81.72,275.08 80.72,275.43 79.73,275.74 78.75,276.01 77.79,276.24 76.84,276.44 75.9,276.6 74.98,276.72 74.06,276.8 73.17,276.84 72.28,276.85 71.41,276.81 70.56,276.74 69.71,276.63 68.89,276.48 68.07,276.29 67.28,276.07 66.5,275.81 65.73,275.51 64.98,275.17 64.24,274.79 63.52,274.38 62.82,273.94 62.13,273.45 61.46,272.94 60.81,272.38 60.17,271.8 59.55,271.18 58.95,270.52 58.37,269.84 57.8,269.12 57.25,268.37 56.72,267.6 56.2,266.79 55.7,265.95 55.23,265.09 54.76,264.2 54.32,263.28 53.9,262.34 53.49,261.38 53.11,260.39 52.74,259.38 52.39,258.34 52.06,257.29 51.75,256.22 51.46,255.13 51.18,254.02 50.93,252.9 50.7,251.77 50.48,250.61 50.29,249.45 50.11,248.28 49.95,247.09 49.81,245.9 49.7,244.7 49.6,243.49 49.52,242.27 49.46,241.06 49.42,239.83 49.4,238.61 49.4,237.39 49.42,236.17 49.46,234.94 49.52,233.73 49.6,232.51 49.7,231.3 49.81,230.1 49.95,228.91 50.11,227.72 50.29,226.55 50.48,225.39 50.7,224.23 50.93,223.1 51.18,221.98 51.46,220.87 51.75,219.78 52.06,218.71 52.39,217.66 52.74,216.62 53.11,215.61 53.49,214.62 53.9,213.66 54.32,212.72 54.76,211.8 55.23,210.91 55.7,210.05 56.2,209.21 56.72,208.4 57.25,207.63 57.8,206.88 58.37,206.16 58.95,205.48 59.55,204.82 60.17,204.2 60.81,203.62 61.46,203.06 62.13,202.55 62.82,202.06 63.52,201.62 64.24,201.21 64.98,200.83 65.73,200.49 66.5,200.19 67.28,199.93 68.07,199.71 68.89,199.52 69.71,199.37 70.56,199.26 71.41,199.19 72.28,199.15 73.17,199.16 74.06,199.2 74.98,199.28 75.9,199.4 76.84,199.56 77.79,199.76 78.75,199.99 79.73,200.26 80.72,200.57 81.72,200.92 82.73,201.3 83.75,201.72 84.78,202.18 85.83,202.67 86.88,203.2 87.95,203.76 89.02,204.35 90.11,204.98 91.21,205.64 92.31,206.34 93.42,207.06 94.55,207.82 95.68,208.6 96.82,209.42 97.96,210.26 99.12,211.13 100.28,212.03 101.45,212.95 102.62,213.9 103.8,214.87 104.99,215.86 106.19,216.88 107.39,217.92 108.59,218.97 109.8,220.05 111.02,221.14 112.23,222.25 113.46,223.38 114.68,224.52 115.91,225.68 117.15,226.84 118.38,228.02 119.62,229.21 120.86,230.4 122.11,231.61 123.35,232.82 124.6,234.03 125.84,235.25 127.09,236.47 128.34,237.69 129.59,238.92 130.83,240.14 132.08,241.36 133.33,242.58 134.57,243.79 135.82,245 137.06,246.2 138.3,247.39 139.54,248.57 140.77,249.74 142,250.9 143.23,252.05 144.46,253.18 145.68,254.3 146.89,255.41 148.1,256.49 149.31,257.56 150.51,258.6 151.71,259.63 152.9,260.64 154.09,261.62 155.27,262.58 156.44,263.51 157.6,264.42 158.76,265.31 159.91,266.16 161.05,266.99 162.19,267.79 163.32,268.56 164.43,269.3 165.54,270.01 166.64,270.69 167.73,271.34 168.81,271.95 169.88,272.52 170.95,273.07 172,273.58 173.03,274.05 174.06,274.49 175.08,274.89 176.09,275.26 177.08,275.58 178.06,275.88 179.03,276.13 179.99,276.35 180.93,276.52 181.86,276.66 182.78,276.76 183.69,276.83 184.58,276.85 185.46,276.84 186.32,276.78 187.17,276.69 188,276.56 188.82,276.39 189.63,276.19 190.42,275.94 191.19,275.66 191.95,275.34 192.69,274.99 193.42,274.59 194.13,274.16 194.82,273.7 195.5,273.2 196.16,272.66 196.81,272.09 197.44,271.49 198.05,270.85 198.64,270.19 199.22,269.48 199.78,268.75 200.32,267.99 200.84,267.2 201.35,266.37 201.84,265.53 202.31,264.65 202.76,263.74 203.19,262.82 203.61,261.86 204,260.88 204.38,259.88 204.74,258.86 205.08,257.82 205.4,256.76 205.7,255.68 205.98,254.58 206.25,253.47 206.49,252.34 206.71,251.19 206.92,250.03 207.11,248.87 207.27,247.69 207.42,246.5 207.55,245.3 207.65,244.09 207.74,242.88 207.81,241.67 207.86,240.45 207.89,239.22 207.9,238"/>
<text transform="translate(390.6 183.2) scale(1 1.2)" class="tt">Scatter plot, axis labels, log scale</text>
<line x1="268.5" y1="191.5" x2="268.5" y2="270.6" stroke="#969696" stroke-width="1" opacity="1"/>
<line x1="268" y1="270.1" x2="514.2" y2="270.1" stroke="#969696" stroke-width="1" opacity="1"/>
<line x1="308.1" y1="265.6" x2="308.1" y2="270.1" stroke="#969696" stroke-width="1" opacity="1"/>
<text transform="translate(307.7 279.5) rotate(0.05) scale(0.9 1.0)" class="tk" text-anchor="middle" textLength="27">1e-08</text>
<line x1="362.5" y1="265.6" x2="362.5" y2="270.1" stroke="#969696" stroke-width="1" opacity="1"/>
<text transform="translate(362.1 279.5) rotate(0.05) scale(0.9 1.0)" class="tk" text-anchor="middle" textLength="27">1e-07</text>
<line x1="416.9" y1="265.6" x2="416.9" y2="270.1" stroke="#969696" stroke-width="1" opacity="1"/>
<text transform="translate(416.5 279.5) rotate(0.05) scale(0.9 1.0)" class="tk" text-anchor="middle" textLength="27">1e-06</text>
<line x1="471.3" y1="265.6" x2="471.3" y2="270.1" stroke="#969696" stroke-width="1" opacity="1"/>
<text transform="translate(470.9 279.5) rotate(0.05) scale(0.9 1.0)" class="tk" text-anchor="middle" textLength="27">1e-05</text>
<line x1="270.08" y1="267.7" x2="270.08" y2="270.1" stroke="#969696" stroke-width="1" opacity="0.6"/>
<line x1="279.66" y1="267.7" x2="279.66" y2="270.1" stroke="#969696" stroke-width="1" opacity="0.6"/>
<line x1="286.45" y1="267.7" x2="286.45" y2="270.1" stroke="#969696" stroke-width="1" opacity="0.6"/>
<line x1="291.72" y1="267.7" x2="291.72" y2="270.1" stroke="#969696" stroke-width="1" opacity="0.6"/>
<line x1="296.03" y1="267.7" x2="296.03" y2="270.1" stroke="#969696" stroke-width="1" opacity="0.6"/>
<line x1="299.67" y1="267.7" x2="299.67" y2="270.1" stroke="#969696" stroke-width="1" opacity="0.6"/>
<line x1="302.83" y1="267.7" x2="302.83" y2="270.1" stroke="#969696" stroke-width="1" opacity="0.6"/>
<line x1="305.61" y1="267.7" x2="305.61" y2="270.1" stroke="#969696" stroke-width="1" opacity="0.6"/>
<line x1="324.48" y1="267.7" x2="324.48" y2="270.1" stroke="#969696" stroke-width="1" opacity="0.6"/>
<line x1="334.06" y1="267.7" x2="334.06" y2="270.1" stroke="#969696" stroke-width="1" opacity="0.6"/>
<line x1="340.85" y1="267.7" x2="340.85" y2="270.1" stroke="#969696" stroke-width="1" opacity="0.6"/>
<line x1="346.12" y1="267.7" x2="346.12" y2="270.1" stroke="#969696" stroke-width="1" opacity="0.6"/>
<line x1="350.43" y1="267.7" x2="350.43" y2="270.1" stroke="#969696" stroke-width="1" opacity="0.6"/>
<line x1="354.07" y1="267.7" x2="354.07" y2="270.1" stroke="#969696" stroke-width="1" opacity="0.6"/>
<line x1="357.23" y1="267.7" x2="357.23" y2="270.1" stroke="#969696" stroke-width="1" opacity="0.6"/>
<line x1="360.01" y1="267.7" x2="360.01" y2="270.1" stroke="#969696" stroke-width="1" opacity="0.6"/>
<line x1="378.88" y1="267.7" x2="378.88" y2="270.1" stroke="#969696" stroke-width="1" opacity="0.6"/>
<line x1="388.46" y1="267.7" x2="388.46" y2="270.1" stroke="#969696" stroke-width="1" opacity="0.6"/>
<line x1="395.25" y1="267.7" x2="395.25" y2="270.1" stroke="#969696" stroke-width="1" opacity="0.6"/>
<line x1="400.52" y1="267.7" x2="400.52" y2="270.1" stroke="#969696" stroke-width="1" opacity="0.6"/>
<line x1="404.83" y1="267.7" x2="404.83" y2="270.1" stroke="#969696" stroke-width="1" opacity="0.6"/>
<line x1="408.47" y1="267.7" x2="408.47" y2="270.1" stroke="#969696" stroke-width="1" opacity="0.6"/>
<line x1="411.63" y1="267.7" x2="411.63" y2="270.1" stroke="#969696" stroke-width="1" opacity="0.6"/>
<line x1="414.41" y1="267.7" x2="414.41" y2="270.1" stroke="#969696" stroke-width="1" opacity="0.6"/>
<line x1="433.28" y1="267.7" x2="433.28" y2="270.1" stroke="#969696" stroke-width="1" opacity="0.6"/>
<line x1="442.86" y1="267.7" x2="442.86" y2="270.1" stroke="#969696" stroke-width="1" opacity="0.6"/>
<line x1="449.65" y1="267.7" x2="449.65" y2="270.1" stroke="#969696" stroke-width="1" opacity="0.6"/>
<line x1="454.92" y1="267.7" x2="454.92" y2="270.1" stroke="#969696" stroke-width="1" opacity="0.6"/>
<line x1="459.23" y1="267.7" x2="459.23" y2="270.1" stroke="#969696" stroke-width="1" opacity="0.6"/>
<line x1="462.87" y1="267.7" x2="462.87" y2="270.1" stroke="#969696" stroke-width="1" opacity="0.6"/>
<line x1="466.03" y1="267.7" x2="466.03" y2="270.1" stroke="#969696" stroke-width="1" opacity="0.6"/>
<line x1="468.81" y1="267.7" x2="468.81" y2="270.1" stroke="#969696" stroke-width="1" opacity="0.6"/>
<line x1="487.68" y1="267.7" x2="487.68" y2="270.1" stroke="#969696" stroke-width="1" opacity="0.6"/>
<line x1="497.26" y1="267.7" x2="497.26" y2="270.1" stroke="#969696" stroke-width="1" opacity="0.6"/>
<line x1="504.05" y1="267.7" x2="504.05" y2="270.1" stroke="#969696" stroke-width="1" opacity="0.6"/>
<line x1="509.32" y1="267.7" x2="509.32" y2="270.1" stroke="#969696" stroke-width="1" opacity="0.6"/>
<line x1="513.63" y1="267.7" x2="513.63" y2="270.1" stroke="#969696" stroke-width="1" opacity="0.6"/>
<line x1="268.5" y1="198.8" x2="271.1" y2="198.8" stroke="#969696" stroke-width="1" opacity="0.75"/>
<text transform="translate(263.4 201.9) rotate(0.05) scale(0.9 1.0)" class="tk" text-anchor="end" textLength="21.8">1.07</text>
<line x1="268.5" y1="211.8" x2="271.1" y2="211.8" stroke="#969696" stroke-width="1" opacity="0.75"/>
<text transform="translate(263.4 214.9) rotate(0.05) scale(0.9 1.0)" class="tk" text-anchor="end" textLength="21.8">1.06</text>
<line x1="268.5" y1="224.8" x2="271.1" y2="224.8" stroke="#969696" stroke-width="1" opacity="0.75"/>
<text transform="translate(263.4 227.9) rotate(0.05) scale(0.9 1.0)" class="tk" text-anchor="end" textLength="21.8">1.05</text>
<line x1="268.5" y1="237.8" x2="271.1" y2="237.8" stroke="#969696" stroke-width="1" opacity="0.75"/>
<text transform="translate(263.4 240.9) rotate(0.05) scale(0.9 1.0)" class="tk" text-anchor="end" textLength="21.8">1.04</text>
<line x1="268.5" y1="250.8" x2="271.1" y2="250.8" stroke="#969696" stroke-width="1" opacity="0.75"/>
<text transform="translate(263.4 253.9) rotate(0.05) scale(0.9 1.0)" class="tk" text-anchor="end" textLength="21.8">1.03</text>
<line x1="268.5" y1="263.8" x2="271.1" y2="263.8" stroke="#969696" stroke-width="1" opacity="0.75"/>
<text transform="translate(263.4 266.9) rotate(0.05) scale(0.9 1.0)" class="tk" text-anchor="end" textLength="21.8">1.02</text>
<line x1="268.5" y1="270.3" x2="270.5" y2="270.3" stroke="#969696" stroke-width="1" opacity="0.4"/>
<line x1="268.5" y1="257.3" x2="270.5" y2="257.3" stroke="#969696" stroke-width="1" opacity="0.4"/>
<line x1="268.5" y1="244.3" x2="270.5" y2="244.3" stroke="#969696" stroke-width="1" opacity="0.4"/>
<line x1="268.5" y1="231.3" x2="270.5" y2="231.3" stroke="#969696" stroke-width="1" opacity="0.4"/>
<line x1="268.5" y1="218.3" x2="270.5" y2="218.3" stroke="#969696" stroke-width="1" opacity="0.4"/>
<line x1="268.5" y1="205.3" x2="270.5" y2="205.3" stroke="#969696" stroke-width="1" opacity="0.4"/>
<g fill="#6666ff" fill-opacity="0.3">
<path d="M282.54 226.46h7.6l-3.8 7.6z"/>
<path d="M327.69 242.71h7.6l-3.8 7.6z"/>
<path d="M334.76 251.16h7.6l-3.8 7.6z"/>
<path d="M344.56 242.71h7.6l-3.8 7.6z"/>
<path d="M350.54 244.01h7.6l-3.8 7.6z"/>
<path d="M358.7 225.16h7.6l-3.8 7.6z"/>
<path d="M360.88 249.86h7.6l-3.8 7.6z"/>
<path d="M364.68 231.66h7.6l-3.8 7.6z"/>
<path d="M369.58 232.96h7.6l-3.8 7.6z"/>
<path d="M490.67 199.55h7.6l-3.8 7.6z"/>
<path d="M489.26 202.41h7.6l-3.8 7.6z"/>
<path d="M487.63 204.36h7.6l-3.8 7.6z"/>
<path d="M459.39 230.74h7.6l-3.8 7.6z"/>
<path d="M415.92 247.12h7.6l-3.8 7.6z"/>
<path d="M450.01 245.55h7.6l-3.8 7.6z"/>
<path d="M483.11 222.13h7.6l-3.8 7.6z"/>
<path d="M448.66 232.8h7.6l-3.8 7.6z"/>
<path d="M471.59 230.1h7.6l-3.8 7.6z"/>
<path d="M455.96 233.33h7.6l-3.8 7.6z"/>
<path d="M426.74 241.58h7.6l-3.8 7.6z"/>
<path d="M474.53 227.99h7.6l-3.8 7.6z"/>
<path d="M471.03 239.59h7.6l-3.8 7.6z"/>
<path d="M429.57 242.21h7.6l-3.8 7.6z"/>
<path d="M451.58 223.42h7.6l-3.8 7.6z"/>
<path d="M461.15 232.62h7.6l-3.8 7.6z"/>
<path d="M463.33 228.83h7.6l-3.8 7.6z"/>
<path d="M454.81 234.87h7.6l-3.8 7.6z"/>
<path d="M462.84 237.1h7.6l-3.8 7.6z"/>
<path d="M459.84 242.65h7.6l-3.8 7.6z"/>
<path d="M465.31 232.85h7.6l-3.8 7.6z"/>
<path d="M459.56 217.59h7.6l-3.8 7.6z"/>
<path d="M467.92 229.3h7.6l-3.8 7.6z"/>
<path d="M456.59 236.52h7.6l-3.8 7.6z"/>
<path d="M469.84 232.37h7.6l-3.8 7.6z"/>
<path d="M452.99 230.35h7.6l-3.8 7.6z"/>
<path d="M471.23 231.01h7.6l-3.8 7.6z"/>
<path d="M439.76 241.75h7.6l-3.8 7.6z"/>
<path d="M451.86 242.13h7.6l-3.8 7.6z"/>
<path d="M422.41 240.39h7.6l-3.8 7.6z"/>
<path d="M458.8 239.71h7.6l-3.8 7.6z"/>
<path d="M473.96 225.15h7.6l-3.8 7.6z"/>
<path d="M443.95 233.71h7.6l-3.8 7.6z"/>
<path d="M372.95 229.53h7.6l-3.8 7.6z"/>
<path d="M475.81 218.43h7.6l-3.8 7.6z"/>
<path d="M477.19 227.32h7.6l-3.8 7.6z"/>
<path d="M425.9 235.28h7.6l-3.8 7.6z"/>
<path d="M454.75 229.04h7.6l-3.8 7.6z"/>
<path d="M440.75 227.1h7.6l-3.8 7.6z"/>
<path d="M479.58 213.39h7.6l-3.8 7.6z"/>
<path d="M471.33 223.61h7.6l-3.8 7.6z"/>
<path d="M480.75 224.71h7.6l-3.8 7.6z"/>
<path d="M391 238.21h7.6l-3.8 7.6z"/>
<path d="M454.45 230.15h7.6l-3.8 7.6z"/>
<path d="M400.64 251.03h7.6l-3.8 7.6z"/>
<path d="M475.61 220.35h7.6l-3.8 7.6z"/>
<path d="M452.14 229.95h7.6l-3.8 7.6z"/>
<path d="M476.06 233.69h7.6l-3.8 7.6z"/>
<path d="M476.31 225.9h7.6l-3.8 7.6z"/>
<path d="M489.89 217.08h7.6l-3.8 7.6z"/>
<path d="M464.44 237.87h7.6l-3.8 7.6z"/>
<path d="M440.59 221.8h7.6l-3.8 7.6z"/>
<path d="M434.01 247.37h7.6l-3.8 7.6z"/>
<path d="M444.5 241.17h7.6l-3.8 7.6z"/>
<path d="M464.15 228.22h7.6l-3.8 7.6z"/>
<path d="M445.4 238.81h7.6l-3.8 7.6z"/>
<path d="M459.68 232.43h7.6l-3.8 7.6z"/>
<path d="M479.27 226.51h7.6l-3.8 7.6z"/>
<path d="M458.18 230.8h7.6l-3.8 7.6z"/>
<path d="M474.96 219.7h7.6l-3.8 7.6z"/>
<path d="M423.59 234.02h7.6l-3.8 7.6z"/>
<path d="M462.6 216h7.6l-3.8 7.6z"/>
<path d="M424.1 232.73h7.6l-3.8 7.6z"/>
<path d="M474.39 227.31h7.6l-3.8 7.6z"/>
<path d="M435.64 239.2h7.6l-3.8 7.6z"/>
<path d="M482.56 216.3h7.6l-3.8 7.6z"/>
<path d="M461.05 228.33h7.6l-3.8 7.6z"/>
<path d="M474.13 223.3h7.6l-3.8 7.6z"/>
<path d="M460.33 225.65h7.6l-3.8 7.6z"/>
<path d="M399.36 239.57h7.6l-3.8 7.6z"/>
<path d="M486.08 216.73h7.6l-3.8 7.6z"/>
<path d="M448.49 240.7h7.6l-3.8 7.6z"/>
<path d="M475.27 228.68h7.6l-3.8 7.6z"/>
<path d="M471.49 226.05h7.6l-3.8 7.6z"/>
<path d="M465.42 223.81h7.6l-3.8 7.6z"/>
<path d="M453.58 232.27h7.6l-3.8 7.6z"/>
<path d="M477.82 232.5h7.6l-3.8 7.6z"/>
<path d="M477.73 223.44h7.6l-3.8 7.6z"/>
<path d="M451.74 225.68h7.6l-3.8 7.6z"/>
<path d="M436.14 236.53h7.6l-3.8 7.6z"/>
<path d="M447.11 234.69h7.6l-3.8 7.6z"/>
<path d="M461.27 219.9h7.6l-3.8 7.6z"/>
<path d="M484.47 204.8h7.6l-3.8 7.6z"/>
<path d="M464.39 234.52h7.6l-3.8 7.6z"/>
<path d="M410.12 252.83h7.6l-3.8 7.6z"/>
<path d="M455.69 233.92h7.6l-3.8 7.6z"/>
<path d="M468.28 225.31h7.6l-3.8 7.6z"/>
<path d="M473.93 226.46h7.6l-3.8 7.6z"/>
<path d="M450.36 244.63h7.6l-3.8 7.6z"/>
<path d="M476.13 213.15h7.6l-3.8 7.6z"/>
<path d="M463.84 216.55h7.6l-3.8 7.6z"/>
<path d="M457.02 236.69h7.6l-3.8 7.6z"/>
<path d="M474.5 213.36h7.6l-3.8 7.6z"/>
<path d="M447.78 226.8h7.6l-3.8 7.6z"/>
<path d="M431.07 240.34h7.6l-3.8 7.6z"/>
<path d="M431.25 221.32h7.6l-3.8 7.6z"/>
<path d="M453.65 227.99h7.6l-3.8 7.6z"/>
<path d="M477.23 214.92h7.6l-3.8 7.6z"/>
<path d="M405.59 243.11h7.6l-3.8 7.6z"/>
<path d="M447.22 228.1h7.6l-3.8 7.6z"/>
<path d="M434.2 245.43h7.6l-3.8 7.6z"/>
<path d="M463.82 228.25h7.6l-3.8 7.6z"/>
<path d="M475.53 212.49h7.6l-3.8 7.6z"/>
<path d="M453.43 236.29h7.6l-3.8 7.6z"/>
<path d="M465.26 229.14h7.6l-3.8 7.6z"/>
<path d="M455.67 225.52h7.6l-3.8 7.6z"/>
<path d="M454.94 237.14h7.6l-3.8 7.6z"/>
<path d="M471.47 227.61h7.6l-3.8 7.6z"/>
<path d="M440.56 236.94h7.6l-3.8 7.6z"/>
<path d="M460.19 232.34h7.6l-3.8 7.6z"/>
<path d="M439.57 232h7.6l-3.8 7.6z"/>
<path d="M448.44 244.83h7.6l-3.8 7.6z"/>
<path d="M436.64 223.49h7.6l-3.8 7.6z"/>
<path d="M453.63 224.98h7.6l-3.8 7.6z"/>
<path d="M460.7 234.6h7.6l-3.8 7.6z"/>
<path d="M448.25 231.14h7.6l-3.8 7.6z"/>
<path d="M415.43 225.01h7.6l-3.8 7.6z"/>
<path d="M436.15 237.56h7.6l-3.8 7.6z"/>
<path d="M438.3 240.94h7.6l-3.8 7.6z"/>
<path d="M452.96 234.2h7.6l-3.8 7.6z"/>
<path d="M479.1 220.26h7.6l-3.8 7.6z"/>
<path d="M487.29 212.75h7.6l-3.8 7.6z"/>
<path d="M445.59 233.87h7.6l-3.8 7.6z"/>
<path d="M470.43 224.77h7.6l-3.8 7.6z"/>
<path d="M457.28 218.69h7.6l-3.8 7.6z"/>
<path d="M426.3 235.05h7.6l-3.8 7.6z"/>
<path d="M473.48 222.48h7.6l-3.8 7.6z"/>
<path d="M445.65 251.84h7.6l-3.8 7.6z"/>
<path d="M438.57 239.67h7.6l-3.8 7.6z"/>
<path d="M460.48 240.08h7.6l-3.8 7.6z"/>
<path d="M441.71 242.39h7.6l-3.8 7.6z"/>
<path d="M441.93 226.34h7.6l-3.8 7.6z"/>
<path d="M424.93 227.67h7.6l-3.8 7.6z"/>
<path d="M470.79 222.06h7.6l-3.8 7.6z"/>
<path d="M488.9 215.87h7.6l-3.8 7.6z"/>
<path d="M380.55 234.93h7.6l-3.8 7.6z"/>
<path d="M451.23 234.05h7.6l-3.8 7.6z"/>
<path d="M463.13 250.19h7.6l-3.8 7.6z"/>
<path d="M442.39 224.85h7.6l-3.8 7.6z"/>
<path d="M458.49 230.72h7.6l-3.8 7.6z"/>
<path d="M469.1 235.08h7.6l-3.8 7.6z"/>
<path d="M489.72 215.31h7.6l-3.8 7.6z"/>
<path d="M471.68 235.87h7.6l-3.8 7.6z"/>
<path d="M450.35 229.97h7.6l-3.8 7.6z"/>
<path d="M476.59 216.1h7.6l-3.8 7.6z"/>
<path d="M453.17 241.57h7.6l-3.8 7.6z"/>
<path d="M478.78 218.08h7.6l-3.8 7.6z"/>
<path d="M447.27 229.07h7.6l-3.8 7.6z"/>
<path d="M452.08 235.8h7.6l-3.8 7.6z"/>
<path d="M458.69 233.47h7.6l-3.8 7.6z"/>
<path d="M468.07 223.64h7.6l-3.8 7.6z"/>
<path d="M426.86 234.36h7.6l-3.8 7.6z"/>
<path d="M467.96 227.72h7.6l-3.8 7.6z"/>
<path d="M482.61 212.25h7.6l-3.8 7.6z"/>
<path d="M447.35 227.8h7.6l-3.8 7.6z"/>
<path d="M446.93 235.59h7.6l-3.8 7.6z"/>
<path d="M474.43 219.39h7.6l-3.8 7.6z"/>
<path d="M426.93 249.82h7.6l-3.8 7.6z"/>
<path d="M415.47 244.88h7.6l-3.8 7.6z"/>
<path d="M452.92 220.97h7.6l-3.8 7.6z"/>
<path d="M472.61 222.18h7.6l-3.8 7.6z"/>
<path d="M428.82 230.87h7.6l-3.8 7.6z"/>
<path d="M440.07 247.74h7.6l-3.8 7.6z"/>
<path d="M462.6 223.06h7.6l-3.8 7.6z"/>
<path d="M459.51 232.23h7.6l-3.8 7.6z"/>
<path d="M461.49 214.08h7.6l-3.8 7.6z"/>
<path d="M440.95 244.72h7.6l-3.8 7.6z"/>
<path d="M421.53 240.22h7.6l-3.8 7.6z"/>
<path d="M457.7 223.33h7.6l-3.8 7.6z"/>
<path d="M450.39 247.01h7.6l-3.8 7.6z"/>
<path d="M464.62 233.85h7.6l-3.8 7.6z"/>
<path d="M455.55 237.1h7.6l-3.8 7.6z"/>
<path d="M389.73 235.2h7.6l-3.8 7.6z"/>
<path d="M478.05 215.7h7.6l-3.8 7.6z"/>
<path d="M455.24 236.46h7.6l-3.8 7.6z"/>
<path d="M465.08 211.93h7.6l-3.8 7.6z"/>
<path d="M471.43 220.9h7.6l-3.8 7.6z"/>
<path d="M460.31 225.5h7.6l-3.8 7.6z"/>
<path d="M474.76 218.03h7.6l-3.8 7.6z"/>
<path d="M455.67 227.94h7.6l-3.8 7.6z"/>
<path d="M455.61 222.73h7.6l-3.8 7.6z"/>
<path d="M450.3 250.33h7.6l-3.8 7.6z"/>
<path d="M460.59 239.75h7.6l-3.8 7.6z"/>
<path d="M471.93 219.6h7.6l-3.8 7.6z"/>
<path d="M437.38 241.41h7.6l-3.8 7.6z"/>
<path d="M448.46 228.78h7.6l-3.8 7.6z"/>
<path d="M453.41 228.39h7.6l-3.8 7.6z"/>
<path d="M448.39 231.84h7.6l-3.8 7.6z"/>
<path d="M427.33 228.77h7.6l-3.8 7.6z"/>
<path d="M464.13 234.1h7.6l-3.8 7.6z"/>
<path d="M456.95 221.77h7.6l-3.8 7.6z"/>
<path d="M455.83 231.01h7.6l-3.8 7.6z"/>
<path d="M484.76 219.08h7.6l-3.8 7.6z"/>
<path d="M478.27 213.86h7.6l-3.8 7.6z"/>
<path d="M469.45 229.16h7.6l-3.8 7.6z"/>
<path d="M466 240.71h7.6l-3.8 7.6z"/>
<path d="M425.01 242.86h7.6l-3.8 7.6z"/>
<path d="M383.23 235.29h7.6l-3.8 7.6z"/>
<path d="M475.86 213.54h7.6l-3.8 7.6z"/>
<path d="M463.79 233.92h7.6l-3.8 7.6z"/>
<path d="M461.52 231.72h7.6l-3.8 7.6z"/>
<path d="M445.08 227.15h7.6l-3.8 7.6z"/>
<path d="M418.91 243.31h7.6l-3.8 7.6z"/>
<path d="M438.38 236.77h7.6l-3.8 7.6z"/>
<path d="M446.62 237.03h7.6l-3.8 7.6z"/>
<path d="M442.94 240.74h7.6l-3.8 7.6z"/>
<path d="M446.18 225.4h7.6l-3.8 7.6z"/>
<path d="M438.77 226.05h7.6l-3.8 7.6z"/>
<path d="M468.91 233.88h7.6l-3.8 7.6z"/>
<path d="M450.54 229.88h7.6l-3.8 7.6z"/>
<path d="M466.5 226.55h7.6l-3.8 7.6z"/>
<path d="M399.9 246.93h7.6l-3.8 7.6z"/>
<path d="M435.66 235.27h7.6l-3.8 7.6z"/>
<path d="M458.41 234.04h7.6l-3.8 7.6z"/>
<path d="M476.02 216.29h7.6l-3.8 7.6z"/>
<path d="M485.02 211.77h7.6l-3.8 7.6z"/>
<path d="M416.45 236.65h7.6l-3.8 7.6z"/>
<path d="M404.77 246.61h7.6l-3.8 7.6z"/>
<path d="M461.02 221.74h7.6l-3.8 7.6z"/>
<path d="M466.36 225.06h7.6l-3.8 7.6z"/>
<path d="M448.17 242.8h7.6l-3.8 7.6z"/>
<path d="M462.14 230.53h7.6l-3.8 7.6z"/>
<path d="M489.56 214.45h7.6l-3.8 7.6z"/>
<path d="M445.7 226.53h7.6l-3.8 7.6z"/>
<path d="M450.81 239.19h7.6l-3.8 7.6z"/>
<path d="M461.2 236.88h7.6l-3.8 7.6z"/>
<path d="M477.86 216.69h7.6l-3.8 7.6z"/>
<path d="M479.27 213.74h7.6l-3.8 7.6z"/>
<path d="M453.81 231.04h7.6l-3.8 7.6z"/>
<path d="M474.97 217.48h7.6l-3.8 7.6z"/>
<path d="M457.38 235.7h7.6l-3.8 7.6z"/>
<path d="M460.13 234.43h7.6l-3.8 7.6z"/>
<path d="M436.96 248.23h7.6l-3.8 7.6z"/>
<path d="M471.91 222.38h7.6l-3.8 7.6z"/>
<path d="M463.44 213.03h7.6l-3.8 7.6z"/>
<path d="M419.56 252.38h7.6l-3.8 7.6z"/>
<path d="M464.2 230.38h7.6l-3.8 7.6z"/>
<path d="M435.58 239.38h7.6l-3.8 7.6z"/>
<path d="M470.34 225.23h7.6l-3.8 7.6z"/>
<path d="M462.66 234.97h7.6l-3.8 7.6z"/>
<path d="M447.79 222.17h7.6l-3.8 7.6z"/>
<path d="M454.16 237.14h7.6l-3.8 7.6z"/>
<path d="M470.03 230.09h7.6l-3.8 7.6z"/>
<path d="M416.94 228.62h7.6l-3.8 7.6z"/>
<path d="M478.93 222.39h7.6l-3.8 7.6z"/>
<path d="M434.06 233.97h7.6l-3.8 7.6z"/>
<path d="M441.06 225.9h7.6l-3.8 7.6z"/>
<path d="M475.42 210.53h7.6l-3.8 7.6z"/>
<path d="M476.92 217.43h7.6l-3.8 7.6z"/>
<path d="M429.42 243.36h7.6l-3.8 7.6z"/>
<path d="M454.99 238.14h7.6l-3.8 7.6z"/>
<path d="M481.99 213.05h7.6l-3.8 7.6z"/>
<path d="M485.74 208.8h7.6l-3.8 7.6z"/>
<path d="M468.52 238.56h7.6l-3.8 7.6z"/>
<path d="M487.82 214.09h7.6l-3.8 7.6z"/>
<path d="M392.91 239.75h7.6l-3.8 7.6z"/>
<path d="M455.73 234.01h7.6l-3.8 7.6z"/>
<path d="M474.83 211.69h7.6l-3.8 7.6z"/>
<path d="M468.04 228.97h7.6l-3.8 7.6z"/>
<path d="M445.88 227.58h7.6l-3.8 7.6z"/>
<path d="M448.95 224.54h7.6l-3.8 7.6z"/>
<path d="M454.41 220.85h7.6l-3.8 7.6z"/>
<path d="M415.67 223.6h7.6l-3.8 7.6z"/>
<path d="M457.52 245.1h7.6l-3.8 7.6z"/>
<path d="M474.65 223.87h7.6l-3.8 7.6z"/>
<path d="M479.2 210.05h7.6l-3.8 7.6z"/>
<path d="M456.14 236.68h7.6l-3.8 7.6z"/>
<path d="M467.98 239.27h7.6l-3.8 7.6z"/>
<path d="M435.23 250.1h7.6l-3.8 7.6z"/>
<path d="M470.53 219.95h7.6l-3.8 7.6z"/>
<path d="M459.12 231.28h7.6l-3.8 7.6z"/>
<path d="M477.07 222.64h7.6l-3.8 7.6z"/>
<path d="M389.53 235.57h7.6l-3.8 7.6z"/>
<path d="M430.52 237.64h7.6l-3.8 7.6z"/>
<path d="M472.43 224.03h7.6l-3.8 7.6z"/>
<path d="M484.64 224.05h7.6l-3.8 7.6z"/>
<path d="M461.58 233.74h7.6l-3.8 7.6z"/>
<path d="M477.19 227.83h7.6l-3.8 7.6z"/>
<path d="M458.58 227.76h7.6l-3.8 7.6z"/>
<path d="M441.63 237.34h7.6l-3.8 7.6z"/>
<path d="M451.49 228.33h7.6l-3.8 7.6z"/>
<path d="M483.89 224.42h7.6l-3.8 7.6z"/>
<path d="M483.7 201.74h7.6l-3.8 7.6z"/>
<path d="M465.39 232.87h7.6l-3.8 7.6z"/>
<path d="M477.62 218.55h7.6l-3.8 7.6z"/>
<path d="M386.39 230.42h7.6l-3.8 7.6z"/>
<path d="M482.21 211.89h7.6l-3.8 7.6z"/>
<path d="M462.62 229.51h7.6l-3.8 7.6z"/>
<path d="M445.92 234.1h7.6l-3.8 7.6z"/>
<path d="M448.78 246.68h7.6l-3.8 7.6z"/>
<path d="M471.66 220.18h7.6l-3.8 7.6z"/>
<path d="M457.77 230.58h7.6l-3.8 7.6z"/>
<path d="M424.12 240.16h7.6l-3.8 7.6z"/>
<path d="M478.76 219.43h7.6l-3.8 7.6z"/>
<path d="M455.43 236.73h7.6l-3.8 7.6z"/>
<path d="M458.62 238.2h7.6l-3.8 7.6z"/>
<path d="M475.2 214.89h7.6l-3.8 7.6z"/>
<path d="M488.47 202.19h7.6l-3.8 7.6z"/>
<path d="M420.61 225.44h7.6l-3.8 7.6z"/>
<path d="M458.07 234.95h7.6l-3.8 7.6z"/>
<path d="M447.73 236.78h7.6l-3.8 7.6z"/>
<path d="M461.86 227.47h7.6l-3.8 7.6z"/>
<path d="M467.97 226.48h7.6l-3.8 7.6z"/>
<path d="M447.14 217.66h7.6l-3.8 7.6z"/>
<path d="M459.8 238.26h7.6l-3.8 7.6z"/>
<path d="M474.85 231.39h7.6l-3.8 7.6z"/>
<path d="M398.68 253.15h7.6l-3.8 7.6z"/>
<path d="M450.64 237.89h7.6l-3.8 7.6z"/>
<path d="M470.68 213.83h7.6l-3.8 7.6z"/>
<path d="M408.05 231.31h7.6l-3.8 7.6z"/>
<path d="M408.04 250h7.6l-3.8 7.6z"/>
<path d="M474.02 220.18h7.6l-3.8 7.6z"/>
<path d="M452.41 234.26h7.6l-3.8 7.6z"/>
<path d="M440.99 230.62h7.6l-3.8 7.6z"/>
<path d="M461.27 221.33h7.6l-3.8 7.6z"/>
<path d="M485.31 221.29h7.6l-3.8 7.6z"/>
<path d="M461.54 213.32h7.6l-3.8 7.6z"/>
<path d="M430.96 243.72h7.6l-3.8 7.6z"/>
<path d="M427.8 231.36h7.6l-3.8 7.6z"/>
<path d="M432.75 237.85h7.6l-3.8 7.6z"/>
<path d="M477.5 209.51h7.6l-3.8 7.6z"/>
<path d="M468 225.37h7.6l-3.8 7.6z"/>
<path d="M426.57 244.13h7.6l-3.8 7.6z"/>
<path d="M459.82 232.95h7.6l-3.8 7.6z"/>
<path d="M467.48 229.15h7.6l-3.8 7.6z"/>
<path d="M485.31 207.34h7.6l-3.8 7.6z"/>
<path d="M421.15 229.23h7.6l-3.8 7.6z"/>
<path d="M452.62 239.87h7.6l-3.8 7.6z"/>
<path d="M476.79 225.96h7.6l-3.8 7.6z"/>
<path d="M470.52 214.33h7.6l-3.8 7.6z"/>
<path d="M480.08 217.62h7.6l-3.8 7.6z"/>
<path d="M433.21 229.67h7.6l-3.8 7.6z"/>
<path d="M456.91 227.81h7.6l-3.8 7.6z"/>
<path d="M477.6 218.73h7.6l-3.8 7.6z"/>
<path d="M448.47 236.51h7.6l-3.8 7.6z"/>
<path d="M474.5 224.86h7.6l-3.8 7.6z"/>
<path d="M478.5 223.46h7.6l-3.8 7.6z"/>
<path d="M462.21 227.75h7.6l-3.8 7.6z"/>
<path d="M472.92 222.01h7.6l-3.8 7.6z"/>
<path d="M472.73 230.15h7.6l-3.8 7.6z"/>
<path d="M436.42 243.04h7.6l-3.8 7.6z"/>
<path d="M421.33 237.86h7.6l-3.8 7.6z"/>
<path d="M453.52 245.63h7.6l-3.8 7.6z"/>
<path d="M469.51 227.4h7.6l-3.8 7.6z"/>
<path d="M453.41 235.4h7.6l-3.8 7.6z"/>
<path d="M410.44 227.55h7.6l-3.8 7.6z"/>
<path d="M447.09 231.88h7.6l-3.8 7.6z"/>
<path d="M466.09 226.16h7.6l-3.8 7.6z"/>
<path d="M486.29 221.55h7.6l-3.8 7.6z"/>
<path d="M433.24 243.34h7.6l-3.8 7.6z"/>
<path d="M426.95 248.56h7.6l-3.8 7.6z"/>
<path d="M432.54 236.85h7.6l-3.8 7.6z"/>
<path d="M465.55 215.26h7.6l-3.8 7.6z"/>
<path d="M457.58 242.27h7.6l-3.8 7.6z"/>
<path d="M429.05 234.4h7.6l-3.8 7.6z"/>
<path d="M481 223.51h7.6l-3.8 7.6z"/>
<path d="M475.35 215.36h7.6l-3.8 7.6z"/>
<path d="M446.9 234.82h7.6l-3.8 7.6z"/>
<path d="M472.41 230.71h7.6l-3.8 7.6z"/>
<path d="M446.11 235.64h7.6l-3.8 7.6z"/>
<path d="M456.82 243.4h7.6l-3.8 7.6z"/>
<path d="M433.92 243.3h7.6l-3.8 7.6z"/>
<path d="M473.6 226.11h7.6l-3.8 7.6z"/>
<path d="M448.59 237.33h7.6l-3.8 7.6z"/>
<path d="M415.21 238.03h7.6l-3.8 7.6z"/>
<path d="M445.98 236.24h7.6l-3.8 7.6z"/>
<path d="M438.25 249.23h7.6l-3.8 7.6z"/>
<path d="M418.31 229.45h7.6l-3.8 7.6z"/>
<path d="M448.22 226.28h7.6l-3.8 7.6z"/>
<path d="M416.94 229.44h7.6l-3.8 7.6z"/>
<path d="M457 238.8h7.6l-3.8 7.6z"/>
<path d="M450.41 240.48h7.6l-3.8 7.6z"/>
<path d="M390.88 236.64h7.6l-3.8 7.6z"/>
<path d="M441.88 241.74h7.6l-3.8 7.6z"/>
<path d="M454.59 206.87h7.6l-3.8 7.6z"/>
<path d="M442.87 230.66h7.6l-3.8 7.6z"/>
<path d="M450.67 236.59h7.6l-3.8 7.6z"/>
<path d="M456.87 239.45h7.6l-3.8 7.6z"/>
<path d="M400.82 234.01h7.6l-3.8 7.6z"/>
<path d="M460.08 228.26h7.6l-3.8 7.6z"/>
<path d="M465.19 221.28h7.6l-3.8 7.6z"/>
<path d="M443.76 232.14h7.6l-3.8 7.6z"/>
<path d="M482.02 217.43h7.6l-3.8 7.6z"/>
<path d="M475.48 217.53h7.6l-3.8 7.6z"/>
<path d="M447.01 243.03h7.6l-3.8 7.6z"/>
<path d="M481.23 226.42h7.6l-3.8 7.6z"/>
<path d="M415.68 246.74h7.6l-3.8 7.6z"/>
<path d="M477.23 229.11h7.6l-3.8 7.6z"/>
<path d="M416.72 227.36h7.6l-3.8 7.6z"/>
<path d="M456.59 229.42h7.6l-3.8 7.6z"/>
<path d="M457.14 248.2h7.6l-3.8 7.6z"/>
<path d="M483.19 209h7.6l-3.8 7.6z"/>
<path d="M385.23 235.31h7.6l-3.8 7.6z"/>
<path d="M467.45 227.71h7.6l-3.8 7.6z"/>
<path d="M460.57 230.36h7.6l-3.8 7.6z"/>
<path d="M452.82 234.38h7.6l-3.8 7.6z"/>
<path d="M471.88 215.02h7.6l-3.8 7.6z"/>
<path d="M463.49 228.74h7.6l-3.8 7.6z"/>
<path d="M473.42 224.42h7.6l-3.8 7.6z"/>
<path d="M451.15 235.41h7.6l-3.8 7.6z"/>
<path d="M459.69 229.9h7.6l-3.8 7.6z"/>
<path d="M462.21 225.52h7.6l-3.8 7.6z"/>
<path d="M462.02 229.34h7.6l-3.8 7.6z"/>
<path d="M465.13 235.94h7.6l-3.8 7.6z"/>
<path d="M457.82 223.49h7.6l-3.8 7.6z"/>
<path d="M471.33 233.51h7.6l-3.8 7.6z"/>
<path d="M475.51 220.45h7.6l-3.8 7.6z"/>
<path d="M456.55 229.36h7.6l-3.8 7.6z"/>
<path d="M398.35 234.91h7.6l-3.8 7.6z"/>
<path d="M469.97 229.15h7.6l-3.8 7.6z"/>
<path d="M463.1 227.32h7.6l-3.8 7.6z"/>
<path d="M441.06 226.21h7.6l-3.8 7.6z"/>
<path d="M450.78 220.47h7.6l-3.8 7.6z"/>
<path d="M486.34 216.61h7.6l-3.8 7.6z"/>
<path d="M473.2 213.9h7.6l-3.8 7.6z"/>
<path d="M414.61 237.97h7.6l-3.8 7.6z"/>
<path d="M469.39 217.93h7.6l-3.8 7.6z"/>
<path d="M403.96 240.95h7.6l-3.8 7.6z"/>
<path d="M441.14 246.3h7.6l-3.8 7.6z"/>
<path d="M463.12 218.08h7.6l-3.8 7.6z"/>
<path d="M456.8 225.15h7.6l-3.8 7.6z"/>
<path d="M473.29 224.87h7.6l-3.8 7.6z"/>
<path d="M463.68 230.33h7.6l-3.8 7.6z"/>
<path d="M393.81 232.46h7.6l-3.8 7.6z"/>
<path d="M461.67 232.07h7.6l-3.8 7.6z"/>
<path d="M466.49 224.5h7.6l-3.8 7.6z"/>
<path d="M483.82 210.46h7.6l-3.8 7.6z"/>
<path d="M463.96 224.88h7.6l-3.8 7.6z"/>
<path d="M426.46 234.96h7.6l-3.8 7.6z"/>
<path d="M454.95 241.53h7.6l-3.8 7.6z"/>
<path d="M473.69 217.01h7.6l-3.8 7.6z"/>
<path d="M435.73 234.55h7.6l-3.8 7.6z"/>
<path d="M415.56 242.67h7.6l-3.8 7.6z"/>
<path d="M436.23 234.75h7.6l-3.8 7.6z"/>
<path d="M422.32 242.81h7.6l-3.8 7.6z"/>
<path d="M445.61 239.39h7.6l-3.8 7.6z"/>
<path d="M470.34 232.46h7.6l-3.8 7.6z"/>
<path d="M416.34 240.37h7.6l-3.8 7.6z"/>
<path d="M457.76 232.13h7.6l-3.8 7.6z"/>
<path d="M471.91 220.44h7.6l-3.8 7.6z"/>
<path d="M440.14 230.79h7.6l-3.8 7.6z"/>
<path d="M430.18 246.59h7.6l-3.8 7.6z"/>
<path d="M473.03 227.84h7.6l-3.8 7.6z"/>
<path d="M454.82 232.6h7.6l-3.8 7.6z"/>
<path d="M470.07 220.55h7.6l-3.8 7.6z"/>
<path d="M441.62 221.28h7.6l-3.8 7.6z"/>
<path d="M392.49 253.07h7.6l-3.8 7.6z"/>
<path d="M433.41 238.76h7.6l-3.8 7.6z"/>
<path d="M474.88 230.02h7.6l-3.8 7.6z"/>
<path d="M458.87 237.67h7.6l-3.8 7.6z"/>
<path d="M459.47 232.85h7.6l-3.8 7.6z"/>
<path d="M444.29 234.81h7.6l-3.8 7.6z"/>
<path d="M470.17 226.31h7.6l-3.8 7.6z"/>
<path d="M454.56 233.29h7.6l-3.8 7.6z"/>
<path d="M438 246.11h7.6l-3.8 7.6z"/>
<path d="M426.86 248.37h7.6l-3.8 7.6z"/>
<path d="M411.85 240.03h7.6l-3.8 7.6z"/>
<path d="M453.52 225.82h7.6l-3.8 7.6z"/>
<path d="M445.75 238.07h7.6l-3.8 7.6z"/>
<path d="M480.85 215.19h7.6l-3.8 7.6z"/>
<path d="M458.73 235.41h7.6l-3.8 7.6z"/>
<path d="M456.83 232.36h7.6l-3.8 7.6z"/>
<path d="M450.35 223.66h7.6l-3.8 7.6z"/>
<path d="M468.96 235.38h7.6l-3.8 7.6z"/>
<path d="M454.57 234.99h7.6l-3.8 7.6z"/>
<path d="M475.43 231.85h7.6l-3.8 7.6z"/>
<path d="M466.42 227.79h7.6l-3.8 7.6z"/>
<path d="M463.07 231.31h7.6l-3.8 7.6z"/>
<path d="M467.82 228.08h7.6l-3.8 7.6z"/>
<path d="M470 229.53h7.6l-3.8 7.6z"/>
<path d="M467.52 220.37h7.6l-3.8 7.6z"/>
<path d="M457.41 223.18h7.6l-3.8 7.6z"/>
<path d="M426.5 231.08h7.6l-3.8 7.6z"/>
<path d="M439.48 235.47h7.6l-3.8 7.6z"/>
<path d="M472.02 224.22h7.6l-3.8 7.6z"/>
<path d="M453.62 234.59h7.6l-3.8 7.6z"/>
<path d="M444.61 227.76h7.6l-3.8 7.6z"/>
<path d="M464.31 236.18h7.6l-3.8 7.6z"/>
<path d="M454.33 239.85h7.6l-3.8 7.6z"/>
<path d="M476.17 216.42h7.6l-3.8 7.6z"/>
<path d="M421.57 242.5h7.6l-3.8 7.6z"/>
<path d="M471.95 226.94h7.6l-3.8 7.6z"/>
<path d="M472.64 214.56h7.6l-3.8 7.6z"/>
<path d="M408.06 245.3h7.6l-3.8 7.6z"/>
<path d="M439.52 250.85h7.6l-3.8 7.6z"/>
<path d="M463.63 230.72h7.6l-3.8 7.6z"/>
<path d="M455.18 230.76h7.6l-3.8 7.6z"/>
<path d="M466.98 224.29h7.6l-3.8 7.6z"/>
<path d="M483.06 215.19h7.6l-3.8 7.6z"/>
<path d="M413.42 231.9h7.6l-3.8 7.6z"/>
<path d="M412.12 239.69h7.6l-3.8 7.6z"/>
<path d="M472.86 229.16h7.6l-3.8 7.6z"/>
<path d="M431.27 236.49h7.6l-3.8 7.6z"/>
<path d="M454.42 250.19h7.6l-3.8 7.6z"/>
<path d="M482.52 213.4h7.6l-3.8 7.6z"/>
<path d="M480.48 220.3h7.6l-3.8 7.6z"/>
<path d="M399.95 231.88h7.6l-3.8 7.6z"/>
<path d="M431.92 225.7h7.6l-3.8 7.6z"/>
<path d="M448.04 231.43h7.6l-3.8 7.6z"/>
<path d="M477.77 210.44h7.6l-3.8 7.6z"/>
<path d="M448.84 243.99h7.6l-3.8 7.6z"/>
<path d="M482.51 218.36h7.6l-3.8 7.6z"/>
<path d="M384.45 248.5h7.6l-3.8 7.6z"/>
<path d="M411.1 243.63h7.6l-3.8 7.6z"/>
<path d="M472.68 211.43h7.6l-3.8 7.6z"/>
<path d="M388.01 247.96h7.6l-3.8 7.6z"/>
</g>
<text x="391" y="297.6" class="al">Y Axis (s)</text>
<text transform="translate(231.2 231) rotate(-90)" class="al">Y Axis (A)</text>
<text transform="translate(629.5 183.2) scale(1 1.2)" class="tt">Updating plot</text>
<line x1="549.5" y1="192" x2="549.5" y2="284.8" stroke="#969696" stroke-width="1" opacity="1"/>
<line x1="549" y1="284.3" x2="712" y2="284.3" stroke="#969696" stroke-width="1" opacity="1"/>
<line x1="559.1" y1="279.8" x2="559.1" y2="284.3" stroke="#969696" stroke-width="1" opacity="1"/>
<text transform="translate(558.7 293.7) rotate(0.05) scale(0.9 1.0)" class="tk" text-anchor="middle">0</text>
<line x1="587.78" y1="281.7" x2="587.78" y2="284.3" stroke="#969696" stroke-width="1" opacity="0.75"/>
<text transform="translate(587.38 293.7) rotate(0.05) scale(0.9 1.0)" class="tk" text-anchor="middle">200</text>
<line x1="616.46" y1="281.7" x2="616.46" y2="284.3" stroke="#969696" stroke-width="1" opacity="0.75"/>
<text transform="translate(616.06 293.7) rotate(0.05) scale(0.9 1.0)" class="tk" text-anchor="middle">400</text>
<line x1="645.14" y1="281.7" x2="645.14" y2="284.3" stroke="#969696" stroke-width="1" opacity="0.75"/>
<text transform="translate(644.74 293.7) rotate(0.05) scale(0.9 1.0)" class="tk" text-anchor="middle">600</text>
<line x1="673.82" y1="281.7" x2="673.82" y2="284.3" stroke="#969696" stroke-width="1" opacity="0.75"/>
<text transform="translate(673.42 293.7) rotate(0.05) scale(0.9 1.0)" class="tk" text-anchor="middle">800</text>
<line x1="702.5" y1="279.8" x2="702.5" y2="284.3" stroke="#969696" stroke-width="1" opacity="1"/>
<text transform="translate(702.1 293.7) rotate(0.05) scale(0.9 1.0)" class="tk" text-anchor="middle">1000</text>
<line x1="573.44" y1="282.3" x2="573.44" y2="284.3" stroke="#969696" stroke-width="1" opacity="0.5"/>
<line x1="602.12" y1="282.3" x2="602.12" y2="284.3" stroke="#969696" stroke-width="1" opacity="0.5"/>
<line x1="630.8" y1="282.3" x2="630.8" y2="284.3" stroke="#969696" stroke-width="1" opacity="0.5"/>
<line x1="659.48" y1="282.3" x2="659.48" y2="284.3" stroke="#969696" stroke-width="1" opacity="0.5"/>
<line x1="688.16" y1="282.3" x2="688.16" y2="284.3" stroke="#969696" stroke-width="1" opacity="0.5"/>
<line x1="549.5" y1="200.8" x2="552.1" y2="200.8" stroke="#969696" stroke-width="1" opacity="0.75"/>
<text transform="translate(545.4 203.9) rotate(0.05) scale(0.9 1.0)" class="tk" text-anchor="end">3</text>
<line x1="549.5" y1="213.9" x2="552.1" y2="213.9" stroke="#969696" stroke-width="1" opacity="0.75"/>
<text transform="translate(545.4 217) rotate(0.05) scale(0.9 1.0)" class="tk" text-anchor="end">2</text>
<line x1="549.5" y1="227" x2="552.1" y2="227" stroke="#969696" stroke-width="1" opacity="0.75"/>
<text transform="translate(545.4 230.1) rotate(0.05) scale(0.9 1.0)" class="tk" text-anchor="end">1</text>
<line x1="549.5" y1="240.1" x2="554" y2="240.1" stroke="#969696" stroke-width="1" opacity="1"/>
<text transform="translate(545.4 243.2) rotate(0.05) scale(0.9 1.0)" class="tk" text-anchor="end">0</text>
<line x1="549.5" y1="253.2" x2="552.1" y2="253.2" stroke="#969696" stroke-width="1" opacity="0.75"/>
<text transform="translate(545.4 256.3) rotate(0.05) scale(0.9 1.0)" class="tk" text-anchor="end">−1</text>
<line x1="549.5" y1="266.3" x2="552.1" y2="266.3" stroke="#969696" stroke-width="1" opacity="0.75"/>
<text transform="translate(545.4 269.4) rotate(0.05) scale(0.9 1.0)" class="tk" text-anchor="end">−2</text>
<line x1="549.5" y1="279.4" x2="552.1" y2="279.4" stroke="#969696" stroke-width="1" opacity="0.75"/>
<text transform="translate(545.4 282.5) rotate(0.05) scale(0.9 1.0)" class="tk" text-anchor="end">−3</text>
<line x1="549.5" y1="194.25" x2="551.5" y2="194.25" stroke="#969696" stroke-width="1" opacity="0.4"/>
<line x1="549.5" y1="207.35" x2="551.5" y2="207.35" stroke="#969696" stroke-width="1" opacity="0.4"/>
<line x1="549.5" y1="220.45" x2="551.5" y2="220.45" stroke="#969696" stroke-width="1" opacity="0.4"/>
<line x1="549.5" y1="233.55" x2="551.5" y2="233.55" stroke="#969696" stroke-width="1" opacity="0.4"/>
<line x1="549.5" y1="246.65" x2="551.5" y2="246.65" stroke="#969696" stroke-width="1" opacity="0.4"/>
<line x1="549.5" y1="259.75" x2="551.5" y2="259.75" stroke="#969696" stroke-width="1" opacity="0.4"/>
<line x1="549.5" y1="272.85" x2="551.5" y2="272.85" stroke="#969696" stroke-width="1" opacity="0.4"/>
<line x1="549.5" y1="285.95" x2="551.5" y2="285.95" stroke="#969696" stroke-width="1" opacity="0.4"/>
<polyline fill="none" stroke="#ff0" stroke-width="1.15" points="559.1,219.14 559.24,240.8 559.39,276.78 559.53,219.69 559.67,262.39 559.82,250.58 559.96,233.84 560.1,255.6 560.25,253.27 560.39,251.41 560.53,233.24 560.68,214.7 560.82,239.58 560.96,254.01 561.11,233.39 561.25,247.52 561.39,240.34 561.54,225.48 561.68,249.41 561.82,239.99 561.97,251.03 562.11,242.05 562.25,236.91 562.4,252.41 562.54,244.32 562.69,243.04 562.83,248.04 562.97,254.88 563.12,257.79 563.26,242.01 563.4,243.45 563.55,215.08 563.69,266.39 563.83,238.7 563.98,235.49 564.12,223.18 564.26,233.85 564.41,250.61 564.55,240.1 564.69,233.35 564.84,244 564.98,230.5 565.12,262.86 565.27,218.56 565.41,221.83 565.55,244.28 565.7,232.49 565.84,239.5 565.98,250.42 566.13,239.01 566.27,271.54 566.41,244.84 566.56,244.78 566.7,241.03 566.84,234.71 566.99,224.19 567.13,248 567.27,209.31 567.42,237.41 567.56,262.8 567.7,245.32 567.85,241.75 567.99,240.59 568.13,236.04 568.28,263.93 568.42,239.52 568.56,248.53 568.71,258.01 568.85,233.58 568.99,230.95 569.14,248.23 569.28,229.62 569.42,244.85 569.57,239.27 569.71,253.77 569.86,220.38 570,267.78 570.14,241.24 570.29,231.45 570.43,263.89 570.57,242.46 570.72,241.06 570.86,229.84 571,224.57 571.15,245.13 571.29,257.33 571.43,223.08 571.58,224.94 571.72,245.85 571.86,235.73 572.01,235.35 572.15,233.05 572.29,237.56 572.44,222.59 572.58,261.73 572.72,207.35 572.87,235.37 573.01,242.8 573.15,225.5 573.3,265.82 573.44,225.64 573.58,235.3 573.73,254.2 573.87,234.71 574.01,243.88 574.16,212.88 574.3,217.54 574.44,234.62 574.59,249.05 574.73,247.36 574.87,244.15 575.02,247.07 575.16,251.33 575.3,247.45 575.45,243.54 575.59,246.53 575.73,248.79 575.88,251.66 576.02,213.09 576.16,258.43 576.31,270.23 576.45,234.72 576.59,244.13 576.74,234.83 576.88,230.15 577.02,224.39 577.17,230.74 577.31,252.47 577.46,226.3 577.6,262.06 577.74,241.52 577.89,246.3 578.03,253.3 578.17,232.74 578.32,242.38 578.46,227.41 578.6,258.55 578.75,229.57 578.89,233.9 579.03,238.53 579.18,257.76 579.32,243.23 579.46,259.35 579.61,264.19 579.75,208.66 579.89,228.02 580.04,217.81 580.18,245.44 580.32,231.44 580.47,231.42 580.61,208.66 580.75,240.05 580.9,242.94 581.04,264.11 581.18,232.51 581.33,234.83 581.47,226.19 581.61,243.51 581.76,218.42 581.9,245.67 582.04,255.72 582.19,228.42 582.33,245.93 582.47,255.71 582.62,238.55 582.76,230.69 582.9,237.1 583.05,233.91 583.19,279.01 583.33,229.88 583.48,221.04 583.62,263.59 583.76,235.56 583.91,230.47 584.05,244.64 584.2,251 584.34,235.17 584.48,244.02 584.63,247.49 584.77,225.79 584.91,223.48 585.06,236.33 585.2,245.75 585.34,233.7 585.49,229.78 585.63,232.25 585.77,258.19 585.92,244.31 586.06,235.63 586.2,232.36 586.35,228.14 586.49,230.66 586.63,254.22 586.78,248.9 586.92,255.3 587.06,217.74 587.21,237.85 587.35,233.22 587.49,227.24 587.64,244.19 587.78,254.42 587.92,245.41 588.07,241.94 588.21,221.41 588.35,229.28 588.5,253.63 588.64,231.83 588.78,230.95 588.93,253.31 589.07,241.45 589.21,262.75 589.36,235.99 589.5,244.03 589.64,256.9 589.79,248.79 589.93,237.11 590.07,246.98 590.22,236.37 590.36,233.22 590.5,250.56 590.65,243.99 590.79,215.62 590.93,238.59 591.08,250.64 591.22,239.35 591.37,256.76 591.51,226 591.65,235.49 591.8,226.59 591.94,228.87 592.08,235.24 592.23,227.96 592.37,237.72 592.51,248.34 592.66,252.84 592.8,245.68 592.94,266.83 593.09,217.6 593.23,204.73 593.37,241.05 593.52,256.5 593.66,263.84 593.8,241.12 593.95,243.89 594.09,242.09 594.23,233.27 594.38,247.8 594.52,235.39 594.66,233.71 594.81,244.27 594.95,243.63 595.09,233.4 595.24,239.39 595.38,238.12 595.52,266.01 595.67,239.37 595.81,235.41 595.95,241.79 596.1,235.92 596.24,217.12 596.38,239.04 596.53,231.82 596.67,250.68 596.81,250.71 596.96,246.07 597.1,252.79 597.24,240.19 597.39,251.72 597.53,242.28 597.67,257.99 597.82,260.66 597.96,248.51 598.1,253.38 598.25,248.23 598.39,247.72 598.54,244.47 598.68,227.09 598.82,223.06 598.97,231.07 599.11,244.57 599.25,221.47 599.4,259.15 599.54,263.83 599.68,236.77 599.83,240.13 599.97,241.83 600.11,239.69 600.26,260.52 600.4,254.5 600.54,224.74 600.69,227.3 600.83,249.08 600.97,216.94 601.12,253.43 601.26,247.21 601.4,236.46 601.55,254.97 601.69,246.17 601.83,242.25 601.98,245.02 602.12,209.97 602.26,232.72 602.41,253.78 602.55,248.58 602.69,237.86 602.84,240.93 602.98,249.9 603.12,234.81 603.27,229.9 603.41,247.95 603.55,230.28 603.7,260.28 603.84,260.14 603.98,233.88 604.13,250.49 604.27,252.51 604.41,243.38 604.56,248.53 604.7,236.03 604.84,258.21 604.99,244.72 605.13,209.3 605.27,238.73 605.42,263.14 605.56,232.64 605.71,233.26 605.85,222.88 605.99,238.25 606.14,248.23 606.28,222.57 606.42,231.24 606.57,262.44 606.71,230.8 606.85,243 607,226.28 607.14,244.75 607.28,230.32 607.43,237.68 607.57,232.8 607.71,240.35 607.86,266.3 608,239.26 608.14,232.24 608.29,234.9 608.43,220 608.57,234.8 608.72,232.19 608.86,215.88 609,239.28 609.15,233.43 609.29,247.61 609.43,239.58 609.58,219.67 609.72,236.22 609.86,222.04 610.01,253.35 610.15,257.53 610.29,236.27 610.44,257.15 610.58,212.35 610.72,224.56 610.87,255.6 611.01,242.18 611.15,247.28 611.3,234.92 611.44,240.82 611.58,228.5 611.73,221.83 611.87,242.85 612.01,254.7 612.16,233.1 612.3,242.15 612.44,225.85 612.59,241.99 612.73,229.77 612.88,206.04 613.02,242.45 613.16,245.69 613.31,231.22 613.45,213.22 613.59,229.68 613.74,241.74 613.88,231.29 614.02,238.68 614.17,256.04 614.31,236.24 614.45,220.83 614.6,244.03 614.74,254.11 614.88,234.02 615.03,217.57 615.17,228.4 615.31,227.42 615.46,214.64 615.6,219.93 615.74,231.23 615.89,242.7 616.03,238.39 616.17,241.39 616.32,229.54 616.46,251.09 616.6,220.87 616.75,238.29 616.89,245.08 617.03,229.95 617.18,264.15 617.32,250.48 617.46,248.29 617.61,229.89 617.75,246.19 617.89,222.37 618.04,245.66 618.18,233.61 618.32,248.91 618.47,225.72 618.61,243.27 618.75,233.64 618.9,246.24 619.04,253.62 619.18,242.97 619.33,226.44 619.47,252.77 619.61,259.13 619.76,243.93 619.9,230.38 620.05,253.24 620.19,246.87 620.33,237.81 620.48,244.22 620.62,236.53 620.76,225.3 620.91,239.84 621.05,240.91 621.19,230.57 621.34,240.87 621.48,251.96 621.62,252.72 621.77,253.98 621.91,217.06 622.05,240.66 622.2,209.97 622.34,231.17 622.48,251.79 622.63,232.27 622.77,247.13 622.91,264.23 623.06,242.78 623.2,253.48 623.34,244.31 623.49,235.83 623.63,214.76 623.77,246.27 623.92,242.14 624.06,235.48 624.2,237.78 624.35,242.07 624.49,253.58 624.63,252.01 624.78,242.38 624.92,254.53 625.06,248.29 625.21,255.67 625.35,226.11 625.49,258.74 625.64,217.13 625.78,247.32 625.92,253.23 626.07,254.82 626.21,230.4 626.35,227.32 626.5,270.23 626.64,235.97 626.78,241.96 626.93,243.12 627.07,238.22 627.22,230.58 627.36,263.16 627.5,265.09 627.65,237.53 627.79,240.98 627.93,231.58 628.08,261.35 628.22,252.38 628.36,220.89 628.51,256.41 628.65,235.58 628.79,249.99 628.94,245.14 629.08,257.25 629.22,225.34 629.37,263.08 629.51,255.01 629.65,251.43 629.8,225.46 629.94,236.38 630.08,231.65 630.23,240.32 630.37,237.16 630.51,233.95 630.66,220.86 630.8,237.03 630.94,258.38 631.09,225.82 631.23,212.59 631.37,253.88 631.52,242.29 631.66,252.33 631.8,215.98 631.95,244.39 632.09,263.69 632.23,236.33 632.38,250.43 632.52,224.06 632.66,238.42 632.81,262.23 632.95,246.33 633.09,253.64 633.24,249.53 633.38,248.11 633.52,263.73 633.67,237.66 633.81,251 633.95,251.22 634.1,230.74 634.24,217.16 634.38,247.93 634.53,217.69 634.67,264.03 634.82,233.1 634.96,247.34 635.1,241.02 635.25,252.38 635.39,247.5 635.53,244.02 635.68,244.42 635.82,234.98 635.96,214.49 636.11,247.99 636.25,242.02 636.39,261.87 636.54,268.92 636.68,222.79 636.82,256.64 636.97,249.38 637.11,239.84 637.25,228.76 637.4,236.18 637.54,217.35 637.68,242.37 637.83,262.61 637.97,238.37 638.11,238.61 638.26,250.29 638.4,244.24 638.54,247.4 638.69,218.51 638.83,247.73 638.97,257.44 639.12,236.62 639.26,262.57 639.4,213.9 639.55,235.04 639.69,250.61 639.83,247.07 639.98,247.57 640.12,220 640.26,235.18 640.41,255.08 640.55,255.62 640.69,241.07 640.84,240.27 640.98,249.66 641.12,236.48 641.27,242.56 641.41,226.7 641.56,234.66 641.7,241.26 641.84,238.41 641.99,251.09 642.13,229.09 642.27,235.33 642.42,245.29 642.56,238.63 642.7,246.78 642.85,213.49 642.99,245.72 643.13,233.64 643.28,235.56 643.42,250.04 643.56,240.03 643.71,244.09 643.85,236.99 643.99,236.91 644.14,230.55 644.28,230.36 644.42,245.17 644.57,246.63 644.71,247.44 644.85,250.83 645,261.79 645.14,232.59 645.28,241.09 645.43,242.73 645.57,260.73 645.71,258.78 645.86,266.89 646,241.38 646.14,231.77 646.29,232.7 646.43,241.07 646.57,253.52 646.72,240.21 646.86,240.07 647,275.47 647.15,230.57 647.29,243.41 647.43,240.53 647.58,231.44 647.72,234.41 647.86,242.22 648.01,264.73 648.15,248.38 648.29,229.66 648.44,238.24 648.58,228.24 648.73,244.4 648.87,239.1 649.01,276.78 649.16,231.54 649.3,235.23 649.44,226.55 649.59,223.48 649.73,222.8 649.87,260.66 650.02,246.15 650.16,244.19 650.3,244.64 650.45,260.48 650.59,223.91 650.73,252.56 650.88,238.86 651.02,266.2 651.16,246.41 651.31,243.31 651.45,251.75 651.59,230.95 651.74,214.15 651.88,251 652.02,250.87 652.17,218.3 652.31,210.62 652.45,244.03 652.6,256.02 652.74,230.98 652.88,237.45 653.03,220.78 653.17,250.94 653.31,242.26 653.46,243.93 653.6,242.8 653.74,226.94 653.89,229.62 654.03,248.07 654.17,241.25 654.32,242.97 654.46,229.03 654.6,242.29 654.75,254.01 654.89,244.4 655.03,240.69 655.18,228.69 655.32,224.22 655.46,224.04 655.61,235.57 655.75,246.55 655.89,232.87 656.04,242.48 656.18,247.88 656.33,236.5 656.47,235.12 656.61,229.35 656.76,251.36 656.9,260.93 657.04,233.89 657.19,252.19 657.33,227.78 657.47,253.89 657.62,247.44 657.76,262.55 657.9,216.29 658.05,245.96 658.19,241.29 658.33,246.82 658.48,243.27 658.62,229.97 658.76,239 658.91,240.46 659.05,225.51 659.19,257.15 659.34,226.24 659.48,209.97 659.62,257.61 659.77,236.95 659.91,256.35 660.05,264.49 660.2,250.89 660.34,233.81 660.48,230.91 660.63,244.91 660.77,251.11 660.91,245.79 661.06,249.26 661.2,248.18 661.34,266.34 661.49,243.3 661.63,241.8 661.77,215.51 661.92,231.92 662.06,242.09 662.2,239.44 662.35,236.26 662.49,249.09 662.63,264.32 662.78,249.45 662.92,243.19 663.07,238.94 663.21,249.3 663.35,251.87 663.5,243.68 663.64,239.73 663.78,270.23 663.93,243.41 664.07,234.95 664.21,252.83 664.36,230.27 664.5,241.1 664.64,257.36 664.79,243.54 664.93,239.07 665.07,253.63 665.22,231.36 665.36,244.53 665.5,234.72 665.65,252.77 665.79,236.52 665.93,231.33 666.08,245.86 666.22,242.77 666.36,247.48 666.51,236.22 666.65,239.98 666.79,234.14 666.94,241.1 667.08,256.18 667.22,256.69 667.37,245.95 667.51,234.62 667.65,215.01 667.8,229.54 667.94,247.98 668.08,263.97 668.23,233.95 668.37,240.12 668.51,255.43 668.66,229.2 668.8,240.23 668.94,245.46 669.09,263.37 669.23,271.54 669.37,239.47 669.52,243.41 669.66,252.28 669.8,244.88 669.95,224.89 670.09,233.79 670.24,216.58 670.38,227.05 670.52,235.96 670.67,229.09 670.81,238.25 670.95,258.3 671.1,247.78 671.24,236.1 671.38,251.88 671.53,246.7 671.67,255.77 671.81,219.22 671.96,256.67 672.1,253.2 672.24,251.29 672.39,228.14 672.53,226.2 672.67,247.13 672.82,233.07 672.96,251.34 673.1,240.2 673.25,212.76 673.39,228.45 673.53,240.73 673.68,256.71 673.82,243.93 673.96,256.64 674.11,264.88 674.25,232.64 674.39,232.93 674.54,237.69 674.68,227.74 674.82,205.38 674.97,222.77 675.11,253.65 675.25,235.44 675.4,234.48 675.54,226.73 675.68,216.54 675.83,235.8 675.97,244.86 676.11,276.78 676.26,236.89 676.4,250.66 676.54,257.01 676.69,242.62 676.83,231.75 676.97,243.96 677.12,253.21 677.26,238.34 677.4,255.58 677.55,259 677.69,221.94 677.84,237.08 677.98,216.64 678.12,258.45 678.27,227.2 678.41,242.3 678.55,206.69 678.7,242.78 678.84,245.63 678.98,234.83 679.13,237.75 679.27,245.81 679.41,228.75 679.56,231.51 679.7,229.08 679.84,235.12 679.99,248.93 680.13,248.81 680.27,232.72 680.42,251.79 680.56,218.97 680.7,239.7 680.85,249.98 680.99,227.19 681.13,240.35 681.28,225.2 681.42,237.46 681.56,218.09 681.71,244.87 681.85,264.83 681.99,258.97 682.14,260.43 682.28,232.76 682.42,270.88 682.57,242.53 682.71,256.71 682.85,231.6 683,234.45 683.14,244.84 683.28,235.02 683.43,240.02 683.57,254.41 683.71,231.57 683.86,246.38 684,251.92 684.14,243.04 684.29,220.59 684.43,216.75 684.58,222.68 684.72,246.26 684.86,252.88 685.01,235.82 685.15,242.12 685.29,209.97 685.44,254.17 685.58,251.13 685.72,253.49 685.87,230.48 686.01,226.88 686.15,248.6 686.3,232.85 686.44,232.12 686.58,249.31 686.73,239.98 686.87,229.98 687.01,252.73 687.16,224.59 687.3,242.67 687.44,239.36 687.59,243.14 687.73,258.54 687.87,235.88 688.02,240.18 688.16,245.2 688.3,242.84 688.45,234.91 688.59,241.93 688.73,246.7 688.88,239.1 689.02,230.71 689.16,239.65 689.31,250.01 689.45,229.76 689.59,243.79 689.74,232.82 689.88,241.92 690.02,251.85 690.17,255.97 690.31,251.31 690.45,243.01 690.6,265.25 690.74,235.33 690.88,226.42 691.03,243.11 691.17,253.91 691.31,274.16 691.46,237.3 691.6,234.97 691.75,239.38 691.89,231.43 692.03,248.47 692.18,243.24 692.32,236.67 692.46,242.91 692.61,234.04 692.75,233.93 692.89,243.48 693.04,252.1 693.18,249.11 693.32,226.47 693.47,255.09 693.61,239.36 693.75,252.5 693.9,211.94 694.04,248 694.18,232.21 694.33,252.15 694.47,209.1 694.61,256.73 694.76,235.66 694.9,255.69 695.04,229.9 695.19,255.73 695.33,245.62 695.47,259.95 695.62,245.05 695.76,240.09 695.9,218.43 696.05,265.57 696.19,233.32 696.33,239.58 696.48,247.68 696.62,242.74 696.76,235.24 696.91,240.57 697.05,240.65 697.19,249.81 697.34,245.09 697.48,234.08 697.62,251.58 697.77,246.56 697.91,239.19 698.05,236.04 698.2,235.3 698.34,242.61 698.48,263.89 698.63,230.62 698.77,227.64 698.91,225.23 699.06,235.88 699.2,229.6 699.35,243.8 699.49,253.97 699.63,242.28 699.78,243.21 699.92,227.76 700.06,230.23 700.21,246.6 700.35,245.44 700.49,240.76 700.64,239.32 700.78,268.92 700.92,246.34 701.07,224.27 701.21,257.55 701.35,248.73 701.5,219.59 701.64,235.46 701.78,239.08 701.93,233.02 702.07,243.02 702.21,239.66 702.36,237.65"/>
<text transform="translate(127.4 323.7) scale(1 1.2)" class="tt">Filled plot, axis disabled</text>
<line x1="38.5" y1="332.2" x2="38.5" y2="434.8" stroke="#969696" stroke-width="1" opacity="1"/>
<line x1="38.5" y1="347.1" x2="43" y2="347.1" stroke="#969696" stroke-width="1" opacity="1"/>
<text transform="translate(34.1 350.2) rotate(0.05) scale(0.9 1.0)" class="tk" text-anchor="end">1</text>
<line x1="38.5" y1="382.6" x2="43" y2="382.6" stroke="#969696" stroke-width="1" opacity="1"/>
<text transform="translate(34.1 385.7) rotate(0.05) scale(0.9 1.0)" class="tk" text-anchor="end">0</text>
<line x1="38.5" y1="418.1" x2="43" y2="418.1" stroke="#969696" stroke-width="1" opacity="1"/>
<text transform="translate(34.1 421.2) rotate(0.05) scale(0.9 1.0)" class="tk" text-anchor="end">−1</text>
<line x1="38.5" y1="432.3" x2="40.5" y2="432.3" stroke="#969696" stroke-width="1" opacity="0.4"/>
<line x1="38.5" y1="425.2" x2="40.5" y2="425.2" stroke="#969696" stroke-width="1" opacity="0.4"/>
<line x1="38.5" y1="411" x2="40.5" y2="411" stroke="#969696" stroke-width="1" opacity="0.4"/>
<line x1="38.5" y1="403.9" x2="40.5" y2="403.9" stroke="#969696" stroke-width="1" opacity="0.4"/>
<line x1="38.5" y1="396.8" x2="40.5" y2="396.8" stroke="#969696" stroke-width="1" opacity="0.4"/>
<line x1="38.5" y1="389.7" x2="40.5" y2="389.7" stroke="#969696" stroke-width="1" opacity="0.4"/>
<line x1="38.5" y1="375.5" x2="40.5" y2="375.5" stroke="#969696" stroke-width="1" opacity="0.4"/>
<line x1="38.5" y1="368.4" x2="40.5" y2="368.4" stroke="#969696" stroke-width="1" opacity="0.4"/>
<line x1="38.5" y1="361.3" x2="40.5" y2="361.3" stroke="#969696" stroke-width="1" opacity="0.4"/>
<line x1="38.5" y1="354.2" x2="40.5" y2="354.2" stroke="#969696" stroke-width="1" opacity="0.4"/>
<line x1="38.5" y1="340" x2="40.5" y2="340" stroke="#969696" stroke-width="1" opacity="0.4"/>
<line x1="38.5" y1="332.9" x2="40.5" y2="332.9" stroke="#969696" stroke-width="1" opacity="0.4"/>
<polygon fill="#14144f" stroke="none" points="49.2,382.42 49.36,380.47 49.52,385.42 49.67,379.07 49.83,382.66 49.99,386.45 50.15,382.77 50.31,377.99 50.46,378.58 50.62,383.48 50.78,376.86 50.94,379.01 51.1,376.84 51.25,376.81 51.41,381.75 51.57,376.04 51.73,379.09 51.89,371.1 52.04,373.67 52.2,375.73 52.36,379.03 52.52,375 52.68,374.28 52.83,378.79 52.99,366.26 53.15,372.41 53.31,367.46 53.47,377.07 53.62,366.97 53.78,377.27 53.94,374.41 54.1,369.83 54.26,371.25 54.41,379.46 54.57,374.67 54.73,367.44 54.89,362.67 55.05,366.5 55.2,370.4 55.36,366.26 55.52,372.82 55.68,366.63 55.84,372.89 55.99,367.82 56.15,367.93 56.31,364.3 56.47,367.9 56.63,362.24 56.78,366.89 56.94,362.91 57.1,362.77 57.26,371.79 57.42,364.81 57.57,364.51 57.73,367.1 57.89,363.39 58.05,368.89 58.21,361.45 58.36,361.32 58.52,361.77 58.68,353.75 58.84,360.99 59,361.72 59.15,364.27 59.31,360.33 59.47,364.51 59.63,356.3 59.79,362.84 59.94,359.7 60.1,352.92 60.26,355.58 60.42,358.58 60.58,354.27 60.73,359.1 60.89,355.82 61.05,358.31 61.21,361.34 61.37,356.34 61.52,354.3 61.68,358.59 61.84,361.01 62,358.74 62.16,365.07 62.31,358.54 62.47,359.96 62.63,348.73 62.79,357.68 62.95,360.92 63.1,352.13 63.26,355.62 63.42,354.6 63.58,353.88 63.74,353.59 63.89,355.45 64.05,350.52 64.21,351.85 64.37,355.26 64.53,353.91 64.68,356.45 64.84,351.9 65,350.09 65.16,350.21 65.32,350.15 65.47,352.6 65.63,346.36 65.79,352.52 65.95,351.51 66.11,352.63 66.26,350.98 66.42,351.96 66.58,343.73 66.74,349.27 66.9,356.6 67.05,352.02 67.21,355.35 67.37,347.06 67.53,345.16 67.69,351.5 67.84,347.58 68,350.37 68.16,348.05 68.32,343.22 68.48,350.49 68.63,353.5 68.79,346.46 68.95,347.06 69.11,346.4 69.27,345.04 69.42,351 69.58,355.46 69.74,344.69 69.9,349.74 70.06,352.49 70.21,352.26 70.37,344.02 70.53,347.31 70.69,346.8 70.85,344.78 71,350.14 71.16,351.66 71.32,350.64 71.48,351.47 71.64,348.53 71.79,350.61 71.95,347.26 72.11,349.06 72.27,347.6 72.43,344.97 72.58,342.27 72.74,341.69 72.9,346.78 73.06,346.41 73.22,348.95 73.37,343.56 73.53,341.68 73.69,349.21 73.85,344.39 74.01,348.27 74.16,347.71 74.32,346.45 74.48,348.54 74.64,343.95 74.8,352.46 74.95,349.63 75.11,347.61 75.27,350.93 75.43,345.97 75.59,352.66 75.74,347.12 75.9,352.47 76.06,347.92 76.22,345.65 76.38,339.68 76.53,343.73 76.69,341.88 76.85,347.44 77.01,340.23 77.17,348.67 77.32,348.78 77.48,352.51 77.64,347.25 77.8,344.39 77.96,350.46 78.11,349.62 78.27,350.04 78.43,349.67 78.59,350.69 78.75,353.49 78.9,343.9 79.06,355.91 79.22,352.32 79.38,347.93 79.54,345.67 79.69,350.13 79.85,350.52 80.01,349.47 80.17,350.71 80.33,346.81 80.48,351.77 80.64,353.7 80.8,352.03 80.96,350.16 81.12,346.29 81.27,345.13 81.43,352.39 81.59,356.33 81.75,356.21 81.91,343.92 82.06,353.07 82.22,350.19 82.38,345.19 82.54,354.59 82.7,353.05 82.85,354.61 83.01,356.63 83.17,350.09 83.33,349.35 83.49,359.98 83.64,350.05 83.8,354.57 83.96,353.29 84.12,353.45 84.28,359.01 84.43,355.69 84.59,358.32 84.75,348.23 84.91,347.49 85.07,355.18 85.22,359.9 85.38,351.84 85.54,356.86 85.7,350.22 85.86,349.67 86.01,350.97 86.17,358.56 86.33,360.94 86.49,360.01 86.65,358.25 86.8,361.44 86.96,354.19 87.12,356.35 87.28,359.07 87.44,360.64 87.59,357.18 87.75,354.86 87.91,366.88 88.07,359.47 88.23,361.65 88.38,363.5 88.54,362.35 88.7,360.95 88.86,355.07 89.02,361.8 89.17,363.82 89.33,366.94 89.49,360.13 89.65,365.84 89.81,363.88 89.96,361.24 90.12,363.89 90.28,365.75 90.44,365.3 90.6,361.8 90.75,365.37 90.91,364.75 91.07,364.42 91.23,367.43 91.39,365.39 91.54,367.86 91.7,363.17 91.86,365.73 92.02,373.98 92.18,368.9 92.33,364.55 92.49,369.57 92.65,370.64 92.81,365.94 92.97,373.65 93.12,369.9 93.28,368.37 93.44,367.78 93.6,374.81 93.76,375.9 93.91,366.51 94.07,374.91 94.23,372.81 94.39,364.2 94.55,374.83 94.7,381.34 94.86,363.97 95.02,370.61 95.18,373.28 95.34,365.04 95.49,375.51 95.65,370.46 95.81,375.9 95.97,377.27 96.13,374.4 96.28,373.85 96.44,372.79 96.6,373.46 96.76,379.82 96.92,378.69 97.07,371.87 97.23,376.95 97.39,379.11 97.55,375.03 97.71,375.2 97.86,375.94 98.02,382.82 98.18,382.6 98.34,378.92 98.5,377.71 98.65,386.54 98.81,384.27 98.97,383.83 99.13,379.79 99.29,387.57 99.44,374.47 99.6,384.11 99.76,382.58 99.92,377.22 100.08,383.26 100.23,383.17 100.39,386.81 100.55,384.87 100.71,390.63 100.87,387.51 101.02,387.46 101.18,391.45 101.34,384.72 101.5,387.03 101.66,395.59 101.81,386.54 101.97,392.97 102.13,387.97 102.29,393.23 102.45,392 102.6,389.58 102.76,384.53 102.92,397.12 103.08,393.33 103.24,393.65 103.39,388.9 103.55,393.99 103.71,391.98 103.87,389.07 104.03,391.41 104.18,395.95 104.34,396.34 104.5,396.08 104.66,394.91 104.82,398.84 104.97,396.32 105.13,394.4 105.29,398.44 105.45,398.8 105.61,396.41 105.76,394.91 105.92,402.83 106.08,401.89 106.24,394.15 106.4,399.11 106.55,403.25 106.71,399.23 106.87,394.35 107.03,402.47 107.19,404 107.34,401.78 107.5,395.55 107.66,403.83 107.82,399.93 107.98,398.54 108.13,400.21 108.29,403.91 108.45,400.68 108.61,402.69 108.77,400.69 108.92,402.47 109.08,403.64 109.24,410.57 109.4,402.42 109.56,405.39 109.71,412.61 109.87,405.68 110.03,404.75 110.19,406.49 110.35,414.98 110.5,409.16 110.66,410.27 110.82,408.24 110.98,415.51 111.14,406.62 111.29,405.98 111.45,406.08 111.61,408.56 111.77,408.96 111.93,405.28 112.08,407.48 112.24,410.8 112.4,408.49 112.56,407.32 112.72,405.75 112.87,408.57 113.03,413.22 113.19,412.39 113.35,410.1 113.51,410 113.66,407.7 113.82,418.14 113.98,414.23 114.14,415.96 114.3,408.29 114.45,409.58 114.61,411.31 114.77,409.82 114.93,414.86 115.09,411.19 115.24,413 115.4,413.06 115.56,414 115.72,410.37 115.88,410.15 116.03,419.11 116.19,416.09 116.35,414.1 116.51,412.53 116.67,420.37 116.82,418.11 116.98,416.09 117.14,408.99 117.3,418.35 117.46,416.81 117.61,415.67 117.77,416.06 117.93,415.27 118.09,416.05 118.25,416.73 118.4,415.18 118.56,415.32 118.72,415.07 118.88,415.1 119.04,420.72 119.19,416.09 119.35,416.27 119.51,414.15 119.67,414.55 119.83,411.61 119.98,419.95 120.14,417.69 120.3,416.54 120.46,419.59 120.62,418.38 120.77,418.8 120.93,419.24 121.09,409.6 121.25,417.93 121.41,412.53 121.56,420.77 121.72,416.81 121.88,420.06 122.04,416.68 122.2,412.04 122.35,411.09 122.51,415.08 122.67,416.35 122.83,417.96 122.99,416.62 123.14,413.16 123.3,423.7 123.46,419.07 123.62,421.41 123.78,414.45 123.93,422.34 124.09,415.03 124.25,422.01 124.41,421.72 124.57,412.65 124.72,414.32 124.88,421.02 125.04,423.94 125.2,421.11 125.36,415.7 125.51,417.83 125.67,420.99 125.83,415.75 125.99,412.76 126.15,421.49 126.3,417.76 126.46,420.23 126.62,413.51 126.78,416.88 126.94,419.5 127.09,422.92 127.25,414.61 127.41,417.97 127.57,416.41 127.73,417.44 127.88,415.28 128.04,422.7 128.2,419.38 128.36,415.22 128.52,409.93 128.67,415.07 128.83,416.33 128.99,418.2 129.15,418.19 129.31,416.48 129.46,418.36 129.62,415.01 129.78,415.28 129.94,408.18 130.1,415.36 130.25,411 130.41,416.22 130.57,411.23 130.73,405.84 130.89,416.26 131.04,418.15 131.2,410.17 131.36,413.54 131.52,414.47 131.68,411.82 131.83,412.18 131.99,408.67 132.15,411.37 132.31,414.65 132.47,416.36 132.62,418.33 132.78,415.87 132.94,407.99 133.1,416.74 133.26,411.29 133.41,406.96 133.57,409 133.73,405.48 133.89,408.05 134.05,404.92 134.2,412.23 134.36,412.9 134.52,402.89 134.68,408.32 134.84,408.99 134.99,411.07 135.15,403.2 135.31,406.89 135.47,406.6 135.63,410.38 135.78,407.57 135.94,409.12 136.1,407.72 136.26,405.98 136.42,408.66 136.57,409.57 136.73,403.57 136.89,409.65 137.05,400.9 137.21,400.16 137.36,410.18 137.52,399.34 137.68,407.63 137.84,399.83 138,406.21 138.15,401.2 138.31,407.29 138.47,401.08 138.63,402.75 138.79,397.16 138.94,399.79 139.1,405.3 139.26,400.73 139.42,403.93 139.58,400.6 139.73,395.52 139.89,395.1 140.05,399.74 140.21,402.87 140.37,399.43 140.52,392.06 140.68,399.53 140.84,403.88 141,403.32 141.16,402.33 141.31,394 141.47,398.69 141.63,399.79 141.79,395.6 141.95,393.12 142.1,396.72 142.26,398.69 142.42,394.79 142.58,392.33 142.74,400.71 142.89,399.49 143.05,387.19 143.21,392.36 143.37,392.27 143.53,398.12 143.68,396.34 143.84,393.45 144,387.78 144.16,391.53 144.32,397.22 144.47,385.74 144.63,385.23 144.79,387.4 144.95,394.01 145.11,392.07 145.26,390.39 145.42,388.65 145.58,382.42 145.74,393.16 145.9,390.57 146.05,387.76 146.21,389.37 146.37,388.82 146.53,391.91 146.69,386.19 146.84,387.14 147,385.02 147.16,382.04 147.32,385.88 147.48,385.03 147.63,383.29 147.79,385.47 147.95,382.83 148.11,389.32 148.27,385.85 148.42,380.67 148.58,381.41 148.74,378.87 148.9,386.09 149.06,382.93 149.21,380.98 149.37,380.69 149.53,380.77 149.69,374.65 149.85,380.91 150,380.07 150.16,376.8 150.32,376.58 150.48,377.42 150.64,371.7 150.79,375.2 150.95,377.65 151.11,379.87 151.27,371.83 151.43,377.97 151.58,374.07 151.74,376.94 151.9,367.34 152.06,371.84 152.22,380.23 152.37,372.7 152.53,378.22 152.69,375.01 152.85,369.86 153.01,376.89 153.16,370.86 153.32,371.94 153.48,368.7 153.64,374.42 153.8,368.51 153.95,371.61 154.11,366.41 154.27,369.54 154.43,367.06 154.59,364.33 154.74,364.87 154.9,368.5 155.06,365.59 155.22,367.75 155.38,365.94 155.53,361.41 155.69,369.81 155.85,370.64 156.01,364.49 156.17,367.84 156.32,361.23 156.48,362.24 156.64,362.74 156.8,364.69 156.96,365.96 157.11,367.12 157.27,365.66 157.43,363.53 157.59,366.49 157.75,359.25 157.9,360.31 158.06,366.85 158.22,371.43 158.38,357.81 158.54,365.65 158.69,371.25 158.85,366.64 159.01,359.8 159.17,355.49 159.33,356.71 159.48,354.51 159.64,353.14 159.8,352.56 159.96,362.21 160.12,359.26 160.27,360.51 160.43,357.85 160.59,359.02 160.75,356.61 160.91,350.84 161.06,359.53 161.22,354.18 161.38,359.97 161.54,360.86 161.7,352.5 161.85,356.32 162.01,355.35 162.17,350.27 162.33,359.83 162.49,354.65 162.64,349.54 162.8,358.11 162.96,353.35 163.12,350.78 163.28,350.56 163.43,351.25 163.59,349.98 163.75,351.52 163.91,350.25 164.07,351.47 164.22,355.81 164.38,352.04 164.54,352.64 164.7,348.07 164.86,350.09 165.01,349.88 165.17,350.86 165.33,349.03 165.49,353.1 165.65,350.04 165.8,353.25 165.96,351.92 166.12,354.46 166.28,342.57 166.44,348.1 166.59,353.43 166.75,351.25 166.91,348.61 167.07,351.23 167.23,346.93 167.38,347.86 167.54,345.26 167.7,359.11 167.86,346.39 168.02,348.1 168.17,345.29 168.33,350.69 168.49,351.19 168.65,352.49 168.81,346.75 168.96,347.74 169.12,354.2 169.28,350.12 169.44,348.14 169.6,352.17 169.75,349.19 169.91,348.19 170.07,349.76 170.23,353.4 170.39,343.59 170.54,346.69 170.7,346.29 170.86,349.48 171.02,346.79 171.18,349.74 171.33,347.74 171.49,346.79 171.65,345.18 171.81,349.26 171.97,349.88 172.12,342.76 172.28,351.99 172.44,346.42 172.6,347.47 172.76,344.68 172.91,348.59 173.07,350.69 173.23,346.66 173.39,351.83 173.55,350.79 173.7,347.19 173.86,346.71 174.02,352.26 174.18,342.72 174.34,347.33 174.49,342.87 174.65,343.36 174.81,347.08 174.97,348.73 175.13,352.32 175.28,343.89 175.44,342.04 175.6,346.92 175.76,347.35 175.92,350.78 176.07,351.23 176.23,348.12 176.39,343.54 176.55,348.84 176.71,344.88 176.86,346.64 177.02,348.5 177.18,351.12 177.34,349.59 177.5,352.58 177.65,345.49 177.81,346.81 177.97,352.08 178.13,351.15 178.29,353.49 178.44,348.46 178.6,347.01 178.76,352.36 178.92,350.88 179.08,348.15 179.23,355.4 179.39,348.92 179.55,344.38 179.71,344.31 179.87,350.61 180.02,350.46 180.18,347.81 180.34,348.24 180.5,345.58 180.66,349.99 180.81,349.83 180.97,350.01 181.13,345.41 181.29,354.74 181.45,347.12 181.6,350.87 181.76,350.85 181.92,354.92 182.08,352.34 182.24,355.49 182.39,361.6 182.55,351.94 182.71,357.64 182.87,352.99 183.03,357.92 183.18,354.86 183.34,355.2 183.5,360.03 183.66,354.2 183.82,356.54 183.97,362.99 184.13,348.58 184.29,353.43 184.45,354.11 184.61,355.48 184.76,352.9 184.92,357.77 185.08,353.79 185.24,353.25 185.4,358.54 185.55,356.89 185.71,356.77 185.87,362.69 186.03,356.57 186.19,358.31 186.34,354.08 186.5,358.04 186.66,361.93 186.82,358.72 186.98,361.25 187.13,367.92 187.29,360.79 187.45,364.81 187.61,356.24 187.77,359.84 187.92,358.2 188.08,360.3 188.24,362.54 188.4,359.73 188.56,367.76 188.71,359.97 188.87,363.49 189.03,370.22 189.19,364.21 189.35,361.87 189.5,365.91 189.66,359.78 189.82,360.4 189.98,367.27 190.14,368.13 190.29,366.57 190.45,367.76 190.61,363.93 190.77,362.94 190.93,364.78 191.08,364.99 191.24,367.88 191.4,368.46 191.56,370.74 191.72,360.54 191.87,365.8 192.03,367.25 192.19,371.95 192.35,375.27 192.51,372.96 192.66,372.17 192.82,372.27 192.98,369.12 193.14,373.03 193.3,369.8 193.45,370.65 193.61,370.32 193.77,373.44 193.93,370.68 194.09,373.21 194.24,373.41 194.4,375 194.56,375.21 194.72,374.33 194.88,373.11 195.03,378.29 195.19,377.21 195.35,376.33 195.51,372.98 195.67,377.18 195.82,375.33 195.98,374.71 196.14,378.17 196.3,373.16 196.46,382.35 196.61,384.05 196.77,383.67 196.93,382.94 197.09,382.46 197.25,381.75 197.4,379.88 197.56,383.15 197.72,383.75 197.88,380.2 198.04,383.2 198.19,382.17 198.35,384.79 198.51,388.18 198.67,384.23 198.83,384.82 198.98,383.46 199.14,385.11 199.3,388.35 199.46,380.68 199.62,390.51 199.77,393.13 199.93,389.24 200.09,389.19 200.25,385.94 200.41,390.06 200.56,388.4 200.72,387.93 200.88,386.71 201.04,395.16 201.2,388.98 201.35,394.48 201.51,386.64 201.67,393.55 201.83,393.64 201.99,389.76 202.14,392.02 202.3,392.6 202.46,390.14 202.62,394.67 202.78,395.42 202.93,390.06 203.09,395.88 203.25,393.64 203.41,398.91 203.57,395.04 203.72,396.4 203.88,394.27 204.04,388.15 204.2,403.01 204.36,400.02 204.51,398.08 204.67,396.76 204.83,402.68 204.99,398.06 205.15,401.13 205.3,398.29 205.46,402.15 205.62,389.37 205.78,398.73 205.94,397.3 206.09,408.27 206.25,403.25 206.41,401.3 206.57,395.04 206.73,404.25 206.88,400.3 207.04,405.09 207.04,393.25 49.2,393.25"/>
<polyline fill="none" stroke="#c8c8c8" stroke-width="0.9" points="49.2,382.42 49.36,380.47 49.52,385.42 49.67,379.07 49.83,382.66 49.99,386.45 50.15,382.77 50.31,377.99 50.46,378.58 50.62,383.48 50.78,376.86 50.94,379.01 51.1,376.84 51.25,376.81 51.41,381.75 51.57,376.04 51.73,379.09 51.89,371.1 52.04,373.67 52.2,375.73 52.36,379.03 52.52,375 52.68,374.28 52.83,378.79 52.99,366.26 53.15,372.41 53.31,367.46 53.47,377.07 53.62,366.97 53.78,377.27 53.94,374.41 54.1,369.83 54.26,371.25 54.41,379.46 54.57,374.67 54.73,367.44 54.89,362.67 55.05,366.5 55.2,370.4 55.36,366.26 55.52,372.82 55.68,366.63 55.84,372.89 55.99,367.82 56.15,367.93 56.31,364.3 56.47,367.9 56.63,362.24 56.78,366.89 56.94,362.91 57.1,362.77 57.26,371.79 57.42,364.81 57.57,364.51 57.73,367.1 57.89,363.39 58.05,368.89 58.21,361.45 58.36,361.32 58.52,361.77 58.68,353.75 58.84,360.99 59,361.72 59.15,364.27 59.31,360.33 59.47,364.51 59.63,356.3 59.79,362.84 59.94,359.7 60.1,352.92 60.26,355.58 60.42,358.58 60.58,354.27 60.73,359.1 60.89,355.82 61.05,358.31 61.21,361.34 61.37,356.34 61.52,354.3 61.68,358.59 61.84,361.01 62,358.74 62.16,365.07 62.31,358.54 62.47,359.96 62.63,348.73 62.79,357.68 62.95,360.92 63.1,352.13 63.26,355.62 63.42,354.6 63.58,353.88 63.74,353.59 63.89,355.45 64.05,350.52 64.21,351.85 64.37,355.26 64.53,353.91 64.68,356.45 64.84,351.9 65,350.09 65.16,350.21 65.32,350.15 65.47,352.6 65.63,346.36 65.79,352.52 65.95,351.51 66.11,352.63 66.26,350.98 66.42,351.96 66.58,343.73 66.74,349.27 66.9,356.6 67.05,352.02 67.21,355.35 67.37,347.06 67.53,345.16 67.69,351.5 67.84,347.58 68,350.37 68.16,348.05 68.32,343.22 68.48,350.49 68.63,353.5 68.79,346.46 68.95,347.06 69.11,346.4 69.27,345.04 69.42,351 69.58,355.46 69.74,344.69 69.9,349.74 70.06,352.49 70.21,352.26 70.37,344.02 70.53,347.31 70.69,346.8 70.85,344.78 71,350.14 71.16,351.66 71.32,350.64 71.48,351.47 71.64,348.53 71.79,350.61 71.95,347.26 72.11,349.06 72.27,347.6 72.43,344.97 72.58,342.27 72.74,341.69 72.9,346.78 73.06,346.41 73.22,348.95 73.37,343.56 73.53,341.68 73.69,349.21 73.85,344.39 74.01,348.27 74.16,347.71 74.32,346.45 74.48,348.54 74.64,343.95 74.8,352.46 74.95,349.63 75.11,347.61 75.27,350.93 75.43,345.97 75.59,352.66 75.74,347.12 75.9,352.47 76.06,347.92 76.22,345.65 76.38,339.68 76.53,343.73 76.69,341.88 76.85,347.44 77.01,340.23 77.17,348.67 77.32,348.78 77.48,352.51 77.64,347.25 77.8,344.39 77.96,350.46 78.11,349.62 78.27,350.04 78.43,349.67 78.59,350.69 78.75,353.49 78.9,343.9 79.06,355.91 79.22,352.32 79.38,347.93 79.54,345.67 79.69,350.13 79.85,350.52 80.01,349.47 80.17,350.71 80.33,346.81 80.48,351.77 80.64,353.7 80.8,352.03 80.96,350.16 81.12,346.29 81.27,345.13 81.43,352.39 81.59,356.33 81.75,356.21 81.91,343.92 82.06,353.07 82.22,350.19 82.38,345.19 82.54,354.59 82.7,353.05 82.85,354.61 83.01,356.63 83.17,350.09 83.33,349.35 83.49,359.98 83.64,350.05 83.8,354.57 83.96,353.29 84.12,353.45 84.28,359.01 84.43,355.69 84.59,358.32 84.75,348.23 84.91,347.49 85.07,355.18 85.22,359.9 85.38,351.84 85.54,356.86 85.7,350.22 85.86,349.67 86.01,350.97 86.17,358.56 86.33,360.94 86.49,360.01 86.65,358.25 86.8,361.44 86.96,354.19 87.12,356.35 87.28,359.07 87.44,360.64 87.59,357.18 87.75,354.86 87.91,366.88 88.07,359.47 88.23,361.65 88.38,363.5 88.54,362.35 88.7,360.95 88.86,355.07 89.02,361.8 89.17,363.82 89.33,366.94 89.49,360.13 89.65,365.84 89.81,363.88 89.96,361.24 90.12,363.89 90.28,365.75 90.44,365.3 90.6,361.8 90.75,365.37 90.91,364.75 91.07,364.42 91.23,367.43 91.39,365.39 91.54,367.86 91.7,363.17 91.86,365.73 92.02,373.98 92.18,368.9 92.33,364.55 92.49,369.57 92.65,370.64 92.81,365.94 92.97,373.65 93.12,369.9 93.28,368.37 93.44,367.78 93.6,374.81 93.76,375.9 93.91,366.51 94.07,374.91 94.23,372.81 94.39,364.2 94.55,374.83 94.7,381.34 94.86,363.97 95.02,370.61 95.18,373.28 95.34,365.04 95.49,375.51 95.65,370.46 95.81,375.9 95.97,377.27 96.13,374.4 96.28,373.85 96.44,372.79 96.6,373.46 96.76,379.82 96.92,378.69 97.07,371.87 97.23,376.95 97.39,379.11 97.55,375.03 97.71,375.2 97.86,375.94 98.02,382.82 98.18,382.6 98.34,378.92 98.5,377.71 98.65,386.54 98.81,384.27 98.97,383.83 99.13,379.79 99.29,387.57 99.44,374.47 99.6,384.11 99.76,382.58 99.92,377.22 100.08,383.26 100.23,383.17 100.39,386.81 100.55,384.87 100.71,390.63 100.87,387.51 101.02,387.46 101.18,391.45 101.34,384.72 101.5,387.03 101.66,395.59 101.81,386.54 101.97,392.97 102.13,387.97 102.29,393.23 102.45,392 102.6,389.58 102.76,384.53 102.92,397.12 103.08,393.33 103.24,393.65 103.39,388.9 103.55,393.99 103.71,391.98 103.87,389.07 104.03,391.41 104.18,395.95 104.34,396.34 104.5,396.08 104.66,394.91 104.82,398.84 104.97,396.32 105.13,394.4 105.29,398.44 105.45,398.8 105.61,396.41 105.76,394.91 105.92,402.83 106.08,401.89 106.24,394.15 106.4,399.11 106.55,403.25 106.71,399.23 106.87,394.35 107.03,402.47 107.19,404 107.34,401.78 107.5,395.55 107.66,403.83 107.82,399.93 107.98,398.54 108.13,400.21 108.29,403.91 108.45,400.68 108.61,402.69 108.77,400.69 108.92,402.47 109.08,403.64 109.24,410.57 109.4,402.42 109.56,405.39 109.71,412.61 109.87,405.68 110.03,404.75 110.19,406.49 110.35,414.98 110.5,409.16 110.66,410.27 110.82,408.24 110.98,415.51 111.14,406.62 111.29,405.98 111.45,406.08 111.61,408.56 111.77,408.96 111.93,405.28 112.08,407.48 112.24,410.8 112.4,408.49 112.56,407.32 112.72,405.75 112.87,408.57 113.03,413.22 113.19,412.39 113.35,410.1 113.51,410 113.66,407.7 113.82,418.14 113.98,414.23 114.14,415.96 114.3,408.29 114.45,409.58 114.61,411.31 114.77,409.82 114.93,414.86 115.09,411.19 115.24,413 115.4,413.06 115.56,414 115.72,410.37 115.88,410.15 116.03,419.11 116.19,416.09 116.35,414.1 116.51,412.53 116.67,420.37 116.82,418.11 116.98,416.09 117.14,408.99 117.3,418.35 117.46,416.81 117.61,415.67 117.77,416.06 117.93,415.27 118.09,416.05 118.25,416.73 118.4,415.18 118.56,415.32 118.72,415.07 118.88,415.1 119.04,420.72 119.19,416.09 119.35,416.27 119.51,414.15 119.67,414.55 119.83,411.61 119.98,419.95 120.14,417.69 120.3,416.54 120.46,419.59 120.62,418.38 120.77,418.8 120.93,419.24 121.09,409.6 121.25,417.93 121.41,412.53 121.56,420.77 121.72,416.81 121.88,420.06 122.04,416.68 122.2,412.04 122.35,411.09 122.51,415.08 122.67,416.35 122.83,417.96 122.99,416.62 123.14,413.16 123.3,423.7 123.46,419.07 123.62,421.41 123.78,414.45 123.93,422.34 124.09,415.03 124.25,422.01 124.41,421.72 124.57,412.65 124.72,414.32 124.88,421.02 125.04,423.94 125.2,421.11 125.36,415.7 125.51,417.83 125.67,420.99 125.83,415.75 125.99,412.76 126.15,421.49 126.3,417.76 126.46,420.23 126.62,413.51 126.78,416.88 126.94,419.5 127.09,422.92 127.25,414.61 127.41,417.97 127.57,416.41 127.73,417.44 127.88,415.28 128.04,422.7 128.2,419.38 128.36,415.22 128.52,409.93 128.67,415.07 128.83,416.33 128.99,418.2 129.15,418.19 129.31,416.48 129.46,418.36 129.62,415.01 129.78,415.28 129.94,408.18 130.1,415.36 130.25,411 130.41,416.22 130.57,411.23 130.73,405.84 130.89,416.26 131.04,418.15 131.2,410.17 131.36,413.54 131.52,414.47 131.68,411.82 131.83,412.18 131.99,408.67 132.15,411.37 132.31,414.65 132.47,416.36 132.62,418.33 132.78,415.87 132.94,407.99 133.1,416.74 133.26,411.29 133.41,406.96 133.57,409 133.73,405.48 133.89,408.05 134.05,404.92 134.2,412.23 134.36,412.9 134.52,402.89 134.68,408.32 134.84,408.99 134.99,411.07 135.15,403.2 135.31,406.89 135.47,406.6 135.63,410.38 135.78,407.57 135.94,409.12 136.1,407.72 136.26,405.98 136.42,408.66 136.57,409.57 136.73,403.57 136.89,409.65 137.05,400.9 137.21,400.16 137.36,410.18 137.52,399.34 137.68,407.63 137.84,399.83 138,406.21 138.15,401.2 138.31,407.29 138.47,401.08 138.63,402.75 138.79,397.16 138.94,399.79 139.1,405.3 139.26,400.73 139.42,403.93 139.58,400.6 139.73,395.52 139.89,395.1 140.05,399.74 140.21,402.87 140.37,399.43 140.52,392.06 140.68,399.53 140.84,403.88 141,403.32 141.16,402.33 141.31,394 141.47,398.69 141.63,399.79 141.79,395.6 141.95,393.12 142.1,396.72 142.26,398.69 142.42,394.79 142.58,392.33 142.74,400.71 142.89,399.49 143.05,387.19 143.21,392.36 143.37,392.27 143.53,398.12 143.68,396.34 143.84,393.45 144,387.78 144.16,391.53 144.32,397.22 144.47,385.74 144.63,385.23 144.79,387.4 144.95,394.01 145.11,392.07 145.26,390.39 145.42,388.65 145.58,382.42 145.74,393.16 145.9,390.57 146.05,387.76 146.21,389.37 146.37,388.82 146.53,391.91 146.69,386.19 146.84,387.14 147,385.02 147.16,382.04 147.32,385.88 147.48,385.03 147.63,383.29 147.79,385.47 147.95,382.83 148.11,389.32 148.27,385.85 148.42,380.67 148.58,381.41 148.74,378.87 148.9,386.09 149.06,382.93 149.21,380.98 149.37,380.69 149.53,380.77 149.69,374.65 149.85,380.91 150,380.07 150.16,376.8 150.32,376.58 150.48,377.42 150.64,371.7 150.79,375.2 150.95,377.65 151.11,379.87 151.27,371.83 151.43,377.97 151.58,374.07 151.74,376.94 151.9,367.34 152.06,371.84 152.22,380.23 152.37,372.7 152.53,378.22 152.69,375.01 152.85,369.86 153.01,376.89 153.16,370.86 153.32,371.94 153.48,368.7 153.64,374.42 153.8,368.51 153.95,371.61 154.11,366.41 154.27,369.54 154.43,367.06 154.59,364.33 154.74,364.87 154.9,368.5 155.06,365.59 155.22,367.75 155.38,365.94 155.53,361.41 155.69,369.81 155.85,370.64 156.01,364.49 156.17,367.84 156.32,361.23 156.48,362.24 156.64,362.74 156.8,364.69 156.96,365.96 157.11,367.12 157.27,365.66 157.43,363.53 157.59,366.49 157.75,359.25 157.9,360.31 158.06,366.85 158.22,371.43 158.38,357.81 158.54,365.65 158.69,371.25 158.85,366.64 159.01,359.8 159.17,355.49 159.33,356.71 159.48,354.51 159.64,353.14 159.8,352.56 159.96,362.21 160.12,359.26 160.27,360.51 160.43,357.85 160.59,359.02 160.75,356.61 160.91,350.84 161.06,359.53 161.22,354.18 161.38,359.97 161.54,360.86 161.7,352.5 161.85,356.32 162.01,355.35 162.17,350.27 162.33,359.83 162.49,354.65 162.64,349.54 162.8,358.11 162.96,353.35 163.12,350.78 163.28,350.56 163.43,351.25 163.59,349.98 163.75,351.52 163.91,350.25 164.07,351.47 164.22,355.81 164.38,352.04 164.54,352.64 164.7,348.07 164.86,350.09 165.01,349.88 165.17,350.86 165.33,349.03 165.49,353.1 165.65,350.04 165.8,353.25 165.96,351.92 166.12,354.46 166.28,342.57 166.44,348.1 166.59,353.43 166.75,351.25 166.91,348.61 167.07,351.23 167.23,346.93 167.38,347.86 167.54,345.26 167.7,359.11 167.86,346.39 168.02,348.1 168.17,345.29 168.33,350.69 168.49,351.19 168.65,352.49 168.81,346.75 168.96,347.74 169.12,354.2 169.28,350.12 169.44,348.14 169.6,352.17 169.75,349.19 169.91,348.19 170.07,349.76 170.23,353.4 170.39,343.59 170.54,346.69 170.7,346.29 170.86,349.48 171.02,346.79 171.18,349.74 171.33,347.74 171.49,346.79 171.65,345.18 171.81,349.26 171.97,349.88 172.12,342.76 172.28,351.99 172.44,346.42 172.6,347.47 172.76,344.68 172.91,348.59 173.07,350.69 173.23,346.66 173.39,351.83 173.55,350.79 173.7,347.19 173.86,346.71 174.02,352.26 174.18,342.72 174.34,347.33 174.49,342.87 174.65,343.36 174.81,347.08 174.97,348.73 175.13,352.32 175.28,343.89 175.44,342.04 175.6,346.92 175.76,347.35 175.92,350.78 176.07,351.23 176.23,348.12 176.39,343.54 176.55,348.84 176.71,344.88 176.86,346.64 177.02,348.5 177.18,351.12 177.34,349.59 177.5,352.58 177.65,345.49 177.81,346.81 177.97,352.08 178.13,351.15 178.29,353.49 178.44,348.46 178.6,347.01 178.76,352.36 178.92,350.88 179.08,348.15 179.23,355.4 179.39,348.92 179.55,344.38 179.71,344.31 179.87,350.61 180.02,350.46 180.18,347.81 180.34,348.24 180.5,345.58 180.66,349.99 180.81,349.83 180.97,350.01 181.13,345.41 181.29,354.74 181.45,347.12 181.6,350.87 181.76,350.85 181.92,354.92 182.08,352.34 182.24,355.49 182.39,361.6 182.55,351.94 182.71,357.64 182.87,352.99 183.03,357.92 183.18,354.86 183.34,355.2 183.5,360.03 183.66,354.2 183.82,356.54 183.97,362.99 184.13,348.58 184.29,353.43 184.45,354.11 184.61,355.48 184.76,352.9 184.92,357.77 185.08,353.79 185.24,353.25 185.4,358.54 185.55,356.89 185.71,356.77 185.87,362.69 186.03,356.57 186.19,358.31 186.34,354.08 186.5,358.04 186.66,361.93 186.82,358.72 186.98,361.25 187.13,367.92 187.29,360.79 187.45,364.81 187.61,356.24 187.77,359.84 187.92,358.2 188.08,360.3 188.24,362.54 188.4,359.73 188.56,367.76 188.71,359.97 188.87,363.49 189.03,370.22 189.19,364.21 189.35,361.87 189.5,365.91 189.66,359.78 189.82,360.4 189.98,367.27 190.14,368.13 190.29,366.57 190.45,367.76 190.61,363.93 190.77,362.94 190.93,364.78 191.08,364.99 191.24,367.88 191.4,368.46 191.56,370.74 191.72,360.54 191.87,365.8 192.03,367.25 192.19,371.95 192.35,375.27 192.51,372.96 192.66,372.17 192.82,372.27 192.98,369.12 193.14,373.03 193.3,369.8 193.45,370.65 193.61,370.32 193.77,373.44 193.93,370.68 194.09,373.21 194.24,373.41 194.4,375 194.56,375.21 194.72,374.33 194.88,373.11 195.03,378.29 195.19,377.21 195.35,376.33 195.51,372.98 195.67,377.18 195.82,375.33 195.98,374.71 196.14,378.17 196.3,373.16 196.46,382.35 196.61,384.05 196.77,383.67 196.93,382.94 197.09,382.46 197.25,381.75 197.4,379.88 197.56,383.15 197.72,383.75 197.88,380.2 198.04,383.2 198.19,382.17 198.35,384.79 198.51,388.18 198.67,384.23 198.83,384.82 198.98,383.46 199.14,385.11 199.3,388.35 199.46,380.68 199.62,390.51 199.77,393.13 199.93,389.24 200.09,389.19 200.25,385.94 200.41,390.06 200.56,388.4 200.72,387.93 200.88,386.71 201.04,395.16 201.2,388.98 201.35,394.48 201.51,386.64 201.67,393.55 201.83,393.64 201.99,389.76 202.14,392.02 202.3,392.6 202.46,390.14 202.62,394.67 202.78,395.42 202.93,390.06 203.09,395.88 203.25,393.64 203.41,398.91 203.57,395.04 203.72,396.4 203.88,394.27 204.04,388.15 204.2,403.01 204.36,400.02 204.51,398.08 204.67,396.76 204.83,402.68 204.99,398.06 205.15,401.13 205.3,398.29 205.46,402.15 205.62,389.37 205.78,398.73 205.94,397.3 206.09,408.27 206.25,403.25 206.41,401.3 206.57,395.04 206.73,404.25 206.88,400.3 207.04,405.09"/>
<text transform="translate(383.5 323.7) scale(1 1.2)" class="tt">Region Selection</text>
<rect x="342.07" y="332.3" width="69.93" height="85.3" fill="#000032"/>
<line x1="342.07" y1="332.3" x2="342.07" y2="417.6" stroke="#90904a" stroke-width="1" opacity="1"/>
<line x1="412" y1="332.3" x2="412" y2="417.6" stroke="#90904a" stroke-width="1" opacity="1"/>
<line x1="253.9" y1="332.3" x2="253.9" y2="418.1" stroke="#969696" stroke-width="1" opacity="1"/>
<line x1="253.4" y1="417.6" x2="514.3" y2="417.6" stroke="#969696" stroke-width="1" opacity="1"/>
<line x1="267.9" y1="413.1" x2="267.9" y2="417.6" stroke="#969696" stroke-width="1" opacity="1"/>
<text transform="translate(267.5 427) rotate(0.05) scale(0.9 1.0)" class="tk" text-anchor="middle">0</text>
<line x1="314.46" y1="415" x2="314.46" y2="417.6" stroke="#969696" stroke-width="1" opacity="0.75"/>
<text transform="translate(314.06 427) rotate(0.05) scale(0.9 1.0)" class="tk" text-anchor="middle">200</text>
<line x1="361.02" y1="415" x2="361.02" y2="417.6" stroke="#969696" stroke-width="1" opacity="0.75"/>
<text transform="translate(360.62 427) rotate(0.05) scale(0.9 1.0)" class="tk" text-anchor="middle">400</text>
<line x1="407.58" y1="415" x2="407.58" y2="417.6" stroke="#969696" stroke-width="1" opacity="0.75"/>
<text transform="translate(407.18 427) rotate(0.05) scale(0.9 1.0)" class="tk" text-anchor="middle">600</text>
<line x1="454.14" y1="415" x2="454.14" y2="417.6" stroke="#969696" stroke-width="1" opacity="0.75"/>
<text transform="translate(453.74 427) rotate(0.05) scale(0.9 1.0)" class="tk" text-anchor="middle">800</text>
<line x1="500.7" y1="413.1" x2="500.7" y2="417.6" stroke="#969696" stroke-width="1" opacity="1"/>
<text transform="translate(500.3 427) rotate(0.05) scale(0.9 1.0)" class="tk" text-anchor="middle">1000</text>
<line x1="291.18" y1="415.6" x2="291.18" y2="417.6" stroke="#969696" stroke-width="1" opacity="0.5"/>
<line x1="337.74" y1="415.6" x2="337.74" y2="417.6" stroke="#969696" stroke-width="1" opacity="0.5"/>
<line x1="384.3" y1="415.6" x2="384.3" y2="417.6" stroke="#969696" stroke-width="1" opacity="0.5"/>
<line x1="430.86" y1="415.6" x2="430.86" y2="417.6" stroke="#969696" stroke-width="1" opacity="0.5"/>
<line x1="477.42" y1="415.6" x2="477.42" y2="417.6" stroke="#969696" stroke-width="1" opacity="0.5"/>
<line x1="253.9" y1="339.9" x2="258.4" y2="339.9" stroke="#969696" stroke-width="1" opacity="1"/>
<text transform="translate(249.5 343) rotate(0.05) scale(0.9 1.0)" class="tk" text-anchor="end">1</text>
<line x1="253.9" y1="397.7" x2="258.4" y2="397.7" stroke="#969696" stroke-width="1" opacity="1"/>
<text transform="translate(249.5 400.8) rotate(0.05) scale(0.9 1.0)" class="tk" text-anchor="end">0</text>
<line x1="253.9" y1="409.26" x2="255.9" y2="409.26" stroke="#969696" stroke-width="1" opacity="0.4"/>
<line x1="253.9" y1="386.14" x2="255.9" y2="386.14" stroke="#969696" stroke-width="1" opacity="0.4"/>
<line x1="253.9" y1="374.58" x2="255.9" y2="374.58" stroke="#969696" stroke-width="1" opacity="0.4"/>
<line x1="253.9" y1="363.02" x2="255.9" y2="363.02" stroke="#969696" stroke-width="1" opacity="0.4"/>
<line x1="253.9" y1="351.46" x2="255.9" y2="351.46" stroke="#969696" stroke-width="1" opacity="0.4"/>
<polyline fill="none" stroke="#c8c8c8" stroke-width="0.9" points="267.9,397.99 268.13,398.09 268.37,398.17 268.6,398.23 268.83,398.27 269.06,398.28 269.3,398.28 269.53,398.25 269.76,398.2 270,398.13 270.23,398.04 270.46,397.93 270.69,397.82 270.93,397.7 271.16,397.59 271.39,397.47 271.62,397.37 271.86,397.27 272.09,397.2 272.32,397.14 272.56,397.11 272.79,397.1 273.02,397.11 273.25,397.15 273.49,397.21 273.72,397.29 273.95,397.38 274.19,397.49 274.42,397.61 274.65,397.73 274.88,397.85 275.12,397.97 275.35,398.08 275.58,398.17 275.82,398.24 276.05,398.29 276.28,398.32 276.51,398.32 276.75,398.3 276.98,398.25 277.21,398.19 277.44,398.1 277.68,397.99 277.91,397.88 278.14,397.75 278.38,397.63 278.61,397.5 278.84,397.39 279.07,397.28 279.31,397.19 279.54,397.12 279.77,397.08 280.01,397.06 280.24,397.06 280.47,397.09 280.7,397.15 280.94,397.22 281.17,397.32 281.4,397.43 281.64,397.55 281.87,397.68 282.1,397.82 282.33,397.94 282.57,398.06 282.8,398.17 283.03,398.25 283.26,398.32 283.5,398.36 283.73,398.37 283.96,398.36 284.2,398.32 284.43,398.25 284.66,398.17 284.89,398.06 285.13,397.94 285.36,397.81 285.59,397.67 285.83,397.54 286.06,397.41 286.29,397.29 286.52,397.19 286.76,397.11 286.99,397.05 287.22,397.01 287.46,397.01 287.69,397.03 287.92,397.08 288.15,397.15 288.39,397.25 288.62,397.36 288.85,397.49 289.08,397.63 289.32,397.77 289.55,397.91 289.78,398.04 290.02,398.16 290.25,398.26 290.48,398.34 290.71,398.39 290.95,398.42 291.18,398.42 291.41,398.39 291.65,398.33 291.88,398.24 292.11,398.14 292.34,398.01 292.58,397.87 292.81,397.73 293.04,397.58 293.28,397.44 293.51,397.31 293.74,397.19 293.97,397.09 294.21,397.01 294.44,396.97 294.67,396.95 294.9,396.96 295.14,397 295.37,397.07 295.6,397.17 295.84,397.28 296.07,397.42 296.3,397.57 296.53,397.72 296.77,397.87 297,398.02 297.23,398.15 297.47,398.27 297.7,398.36 297.93,398.43 298.16,398.47 298.4,398.48 298.63,398.46 298.86,398.41 299.1,398.33 299.33,398.22 299.56,398.09 299.79,397.95 300.03,397.79 300.26,397.63 300.49,397.47 300.72,397.32 300.96,397.19 301.19,397.07 301.42,396.98 301.66,396.92 301.89,396.89 302.12,396.89 302.35,396.92 302.59,396.98 302.82,397.08 303.05,397.2 303.29,397.34 303.52,397.49 303.75,397.65 303.98,397.82 304.22,397.99 304.45,398.14 304.68,398.27 304.92,398.39 305.15,398.48 305.38,398.53 305.61,398.56 305.85,398.54 306.08,398.5 306.31,398.42 306.54,398.32 306.78,398.19 307.01,398.03 307.24,397.87 307.48,397.69 307.71,397.52 307.94,397.35 308.17,397.19 308.41,397.06 308.64,396.95 308.87,396.87 309.11,396.82 309.34,396.8 309.57,396.82 309.8,396.88 310.04,396.97 310.27,397.09 310.5,397.24 310.74,397.4 310.97,397.58 311.2,397.76 311.43,397.95 311.67,398.12 311.9,398.28 312.13,398.41 312.36,398.52 312.6,398.6 312.83,398.64 313.06,398.64 313.3,398.61 313.53,398.53 313.76,398.43 313.99,398.29 314.23,398.14 314.46,397.96 314.69,397.77 314.93,397.57 315.16,397.38 315.39,397.21 315.62,397.05 315.86,396.91 316.09,396.81 316.32,396.74 316.56,396.71 316.79,396.72 317.02,396.76 317.25,396.85 317.49,396.97 317.72,397.12 317.95,397.3 318.18,397.49 318.42,397.69 318.65,397.9 318.88,398.09 319.12,398.28 319.35,398.44 319.58,398.57 319.81,398.67 320.05,398.73 320.28,398.75 320.51,398.73 320.75,398.67 320.98,398.56 321.21,398.43 321.44,398.26 321.68,398.07 321.91,397.86 322.14,397.64 322.38,397.43 322.61,397.22 322.84,397.03 323.07,396.87 323.31,396.74 323.54,396.65 323.77,396.59 324,396.59 324.24,396.62 324.47,396.7 324.7,396.83 324.94,396.98 325.17,397.17 325.4,397.38 325.63,397.6 325.87,397.83 326.1,398.06 326.33,398.27 326.57,398.47 326.8,398.63 327.03,398.76 327.26,398.84 327.5,398.88 327.73,398.88 327.96,398.82 328.2,398.73 328.43,398.58 328.66,398.41 328.89,398.2 329.13,397.97 329.36,397.73 329.59,397.48 329.82,397.24 330.06,397.02 330.29,396.83 330.52,396.66 330.76,396.54 330.99,396.46 331.22,396.43 331.45,396.45 331.69,396.52 331.92,396.64 332.15,396.81 332.39,397.01 332.62,397.24 332.85,397.49 333.08,397.75 333.32,398.01 333.55,398.26 333.78,398.5 334.02,398.7 334.25,398.86 334.48,398.98 334.71,399.05 334.95,399.06 335.18,399.02 335.41,398.93 335.64,398.79 335.88,398.6 336.11,398.37 336.34,398.12 336.58,397.84 336.81,397.56 337.04,397.28 337.27,397.01 337.51,396.77 337.74,396.57 337.97,396.4 338.21,396.29 338.44,396.23 338.67,396.24 338.9,396.3 339.14,396.41 339.37,396.58 339.6,396.8 339.84,397.06 340.07,397.34 340.3,397.64 340.53,397.95 340.77,398.25 341,398.53 341.23,398.78 341.46,398.99 341.7,399.15 341.93,399.26 342.16,399.3 342.4,399.28 342.63,399.19 342.86,399.05 343.09,398.85 343.33,398.6 343.56,398.31 343.79,397.99 344.03,397.66 344.26,397.33 344.49,397 344.72,396.71 344.96,396.44 345.19,396.23 345.42,396.07 345.66,395.97 345.89,395.95 346.12,395.99 346.35,396.1 346.59,396.28 346.82,396.52 347.05,396.81 347.28,397.13 347.52,397.49 347.75,397.86 347.98,398.22 348.22,398.57 348.45,398.89 348.68,399.17 348.91,399.39 349.15,399.54 349.38,399.62 349.61,399.63 349.85,399.56 350.08,399.41 350.31,399.2 350.54,398.92 350.78,398.58 351.01,398.21 351.24,397.81 351.48,397.4 351.71,397 351.94,396.62 352.17,396.27 352.41,395.98 352.64,395.76 352.87,395.61 353.1,395.54 353.34,395.56 353.57,395.66 353.8,395.85 354.04,396.11 354.27,396.44 354.5,396.83 354.73,397.26 354.97,397.72 355.2,398.18 355.43,398.63 355.67,399.05 355.9,399.42 356.13,399.73 356.36,399.96 356.6,400.1 356.83,400.16 357.06,400.11 357.3,399.96 357.53,399.72 357.76,399.4 357.99,399 358.23,398.54 358.46,398.04 358.69,397.52 358.92,396.99 359.16,396.48 359.39,396.02 359.62,395.61 359.86,395.28 360.09,395.04 360.32,394.9 360.55,394.87 360.79,394.96 361.02,395.15 361.25,395.46 361.49,395.86 361.72,396.35 361.95,396.89 362.18,397.49 362.42,398.1 362.65,398.71 362.88,399.3 363.12,399.83 363.35,400.29 363.58,400.65 363.81,400.91 364.05,401.04 364.28,401.03 364.51,400.9 364.74,400.63 364.98,400.23 365.21,399.72 365.44,399.12 365.68,398.45 365.91,397.73 366.14,396.99 366.37,396.26 366.61,395.56 366.84,394.94 367.07,394.41 367.31,394 367.54,393.73 367.77,393.61 368,393.65 368.24,393.86 368.47,394.23 368.7,394.75 368.94,395.41 369.17,396.18 369.4,397.04 369.63,397.95 369.87,398.88 370.1,399.79 370.33,400.65 370.56,401.42 370.8,402.07 371.03,402.56 371.26,402.87 371.5,402.98 371.73,402.88 371.96,402.56 372.19,402.04 372.43,401.32 372.66,400.42 372.89,399.37 373.13,398.21 373.36,396.98 373.59,395.73 373.82,394.5 374.06,393.34 374.29,392.31 374.52,391.45 374.76,390.8 374.99,390.4 375.22,390.28 375.45,390.46 375.69,390.94 375.92,391.73 376.15,392.81 376.38,394.16 376.62,395.73 376.85,397.49 377.08,399.37 377.32,401.31 377.55,403.23 377.78,405.07 378.01,406.74 378.25,408.16 378.48,409.27 378.71,409.99 378.95,410.26 379.18,410.03 379.41,409.26 379.64,407.92 379.88,406.02 380.11,403.54 380.34,400.52 380.58,396.98 380.81,392.99 381.04,388.61 381.27,383.92 381.51,379.02 381.74,373.99 381.97,368.96 382.2,364.02 382.44,359.3 382.67,354.89 382.9,350.89 383.14,347.41 383.37,344.52 383.6,342.28 383.83,340.76 384.07,340 384.3,340 384.53,340.76 384.77,342.28 385,344.52 385.23,347.41 385.46,350.89 385.7,354.89 385.93,359.3 386.16,364.02 386.4,368.96 386.63,373.99 386.86,379.02 387.09,383.92 387.33,388.61 387.56,392.99 387.79,396.98 388.02,400.52 388.26,403.54 388.49,406.02 388.72,407.92 388.96,409.26 389.19,410.03 389.42,410.26 389.65,409.99 389.89,409.27 390.12,408.16 390.35,406.74 390.59,405.07 390.82,403.23 391.05,401.31 391.28,399.37 391.52,397.49 391.75,395.73 391.98,394.16 392.22,392.81 392.45,391.73 392.68,390.94 392.91,390.46 393.15,390.28 393.38,390.4 393.61,390.8 393.84,391.45 394.08,392.31 394.31,393.34 394.54,394.5 394.78,395.73 395.01,396.98 395.24,398.21 395.47,399.37 395.71,400.42 395.94,401.32 396.17,402.04 396.41,402.56 396.64,402.88 396.87,402.98 397.1,402.87 397.34,402.56 397.57,402.07 397.8,401.42 398.04,400.65 398.27,399.79 398.5,398.88 398.73,397.95 398.97,397.04 399.2,396.18 399.43,395.41 399.66,394.75 399.9,394.23 400.13,393.86 400.36,393.65 400.6,393.61 400.83,393.73 401.06,394 401.29,394.41 401.53,394.94 401.76,395.56 401.99,396.26 402.23,396.99 402.46,397.73 402.69,398.45 402.92,399.12 403.16,399.72 403.39,400.23 403.62,400.63 403.86,400.9 404.09,401.03 404.32,401.04 404.55,400.91 404.79,400.65 405.02,400.29 405.25,399.83 405.48,399.3 405.72,398.71 405.95,398.1 406.18,397.49 406.42,396.89 406.65,396.35 406.88,395.86 407.11,395.46 407.35,395.15 407.58,394.96 407.81,394.87 408.05,394.9 408.28,395.04 408.51,395.28 408.74,395.61 408.98,396.02 409.21,396.48 409.44,396.99 409.68,397.52 409.91,398.04 410.14,398.54 410.37,399 410.61,399.4 410.84,399.72 411.07,399.96 411.3,400.11 411.54,400.16 411.77,400.1 412,399.96 412.24,399.73 412.47,399.42 412.7,399.05 412.93,398.63 413.17,398.18 413.4,397.72 413.63,397.26 413.87,396.83 414.1,396.44 414.33,396.11 414.56,395.85 414.8,395.66 415.03,395.56 415.26,395.54 415.5,395.61 415.73,395.76 415.96,395.98 416.19,396.27 416.43,396.62 416.66,397 416.89,397.4 417.12,397.81 417.36,398.21 417.59,398.58 417.82,398.92 418.06,399.2 418.29,399.41 418.52,399.56 418.75,399.63 418.99,399.62 419.22,399.54 419.45,399.39 419.69,399.17 419.92,398.89 420.15,398.57 420.38,398.22 420.62,397.86 420.85,397.49 421.08,397.13 421.32,396.81 421.55,396.52 421.78,396.28 422.01,396.1 422.25,395.99 422.48,395.95 422.71,395.97 422.94,396.07 423.18,396.23 423.41,396.44 423.64,396.71 423.88,397 424.11,397.33 424.34,397.66 424.57,397.99 424.81,398.31 425.04,398.6 425.27,398.85 425.51,399.05 425.74,399.19 425.97,399.28 426.2,399.3 426.44,399.26 426.67,399.15 426.9,398.99 427.14,398.78 427.37,398.53 427.6,398.25 427.83,397.95 428.07,397.64 428.3,397.34 428.53,397.06 428.76,396.8 429,396.58 429.23,396.41 429.46,396.3 429.7,396.24 429.93,396.23 430.16,396.29 430.39,396.4 430.63,396.57 430.86,396.77 431.09,397.01 431.33,397.28 431.56,397.56 431.79,397.84 432.02,398.12 432.26,398.37 432.49,398.6 432.72,398.79 432.96,398.93 433.19,399.02 433.42,399.06 433.65,399.05 433.89,398.98 434.12,398.86 434.35,398.7 434.58,398.5 434.82,398.26 435.05,398.01 435.28,397.75 435.52,397.49 435.75,397.24 435.98,397.01 436.21,396.81 436.45,396.64 436.68,396.52 436.91,396.45 437.15,396.43 437.38,396.46 437.61,396.54 437.84,396.66 438.08,396.83 438.31,397.02 438.54,397.24 438.78,397.48 439.01,397.73 439.24,397.97 439.47,398.2 439.71,398.41 439.94,398.58 440.17,398.73 440.4,398.82 440.64,398.88 440.87,398.88 441.1,398.84 441.34,398.76 441.57,398.63 441.8,398.47 442.03,398.27 442.27,398.06 442.5,397.83 442.73,397.6 442.97,397.38 443.2,397.17 443.43,396.98 443.66,396.83 443.9,396.7 444.13,396.62 444.36,396.59 444.6,396.59 444.83,396.65 445.06,396.74 445.29,396.87 445.53,397.03 445.76,397.22 445.99,397.43 446.22,397.64 446.46,397.86 446.69,398.07 446.92,398.26 447.16,398.43 447.39,398.56 447.62,398.67 447.85,398.73 448.09,398.75 448.32,398.73 448.55,398.67 448.79,398.57 449.02,398.44 449.25,398.28 449.48,398.09 449.72,397.9 449.95,397.69 450.18,397.49 450.42,397.3 450.65,397.12 450.88,396.97 451.11,396.85 451.35,396.76 451.58,396.72 451.81,396.71 452.04,396.74 452.28,396.81 452.51,396.91 452.74,397.05 452.98,397.21 453.21,397.38 453.44,397.57 453.67,397.77 453.91,397.96 454.14,398.14 454.37,398.29 454.61,398.43 454.84,398.53 455.07,398.61 455.3,398.64 455.54,398.64 455.77,398.6 456,398.52 456.24,398.41 456.47,398.28 456.7,398.12 456.93,397.95 457.17,397.76 457.4,397.58 457.63,397.4 457.86,397.24 458.1,397.09 458.33,396.97 458.56,396.88 458.8,396.82 459.03,396.8 459.26,396.82 459.49,396.87 459.73,396.95 459.96,397.06 460.19,397.19 460.43,397.35 460.66,397.52 460.89,397.69 461.12,397.87 461.36,398.03 461.59,398.19 461.82,398.32 462.06,398.42 462.29,398.5 462.52,398.54 462.75,398.56 462.99,398.53 463.22,398.48 463.45,398.39 463.68,398.27 463.92,398.14 464.15,397.99 464.38,397.82 464.62,397.65 464.85,397.49 465.08,397.34 465.31,397.2 465.55,397.08 465.78,396.98 466.01,396.92 466.25,396.89 466.48,396.89 466.71,396.92 466.94,396.98 467.18,397.07 467.41,397.19 467.64,397.32 467.88,397.47 468.11,397.63 468.34,397.79 468.57,397.95 468.81,398.09 469.04,398.22 469.27,398.33 469.5,398.41 469.74,398.46 469.97,398.48 470.2,398.47 470.44,398.43 470.67,398.36 470.9,398.27 471.13,398.15 471.37,398.02 471.6,397.87 471.83,397.72 472.07,397.57 472.3,397.42 472.53,397.28 472.76,397.17 473,397.07 473.23,397 473.46,396.96 473.7,396.95 473.93,396.97 474.16,397.01 474.39,397.09 474.63,397.19 474.86,397.31 475.09,397.44 475.32,397.58 475.56,397.73 475.79,397.87 476.02,398.01 476.26,398.14 476.49,398.24 476.72,398.33 476.95,398.39 477.19,398.42 477.42,398.42 477.65,398.39 477.89,398.34 478.12,398.26 478.35,398.16 478.58,398.04 478.82,397.91 479.05,397.77 479.28,397.63 479.52,397.49 479.75,397.36 479.98,397.25 480.21,397.15 480.45,397.08 480.68,397.03 480.91,397.01 481.14,397.01 481.38,397.05 481.61,397.11 481.84,397.19 482.08,397.29 482.31,397.41 482.54,397.54 482.77,397.67 483.01,397.81 483.24,397.94 483.47,398.06 483.71,398.17 483.94,398.25 484.17,398.32 484.4,398.36 484.64,398.37 484.87,398.36 485.1,398.32 485.34,398.25 485.57,398.17 485.8,398.06 486.03,397.94 486.27,397.82 486.5,397.68 486.73,397.55 486.96,397.43 487.2,397.32 487.43,397.22 487.66,397.15 487.9,397.09 488.13,397.06 488.36,397.06 488.59,397.08 488.83,397.12 489.06,397.19 489.29,397.28 489.53,397.39 489.76,397.5 489.99,397.63 490.22,397.75 490.46,397.88 490.69,397.99 490.92,398.1 491.16,398.19 491.39,398.25 491.62,398.3 491.85,398.32 492.09,398.32 492.32,398.29 492.55,398.24 492.78,398.17 493.02,398.08 493.25,397.97 493.48,397.85 493.72,397.73 493.95,397.61 494.18,397.49 494.41,397.38 494.65,397.29 494.88,397.21 495.11,397.15 495.35,397.11 495.58,397.1 495.81,397.11 496.04,397.14 496.28,397.2 496.51,397.27 496.74,397.37 496.98,397.47 497.21,397.59 497.44,397.7 497.67,397.82 497.91,397.93 498.14,398.04 498.37,398.13 498.6,398.2 498.84,398.25 499.07,398.28 499.3,398.28 499.54,398.27 499.77,398.23 500,398.17 500.23,398.09 500.47,397.99"/>
<text transform="translate(629.7 323.5) scale(1 1.2)" class="tt">Zoom on selected region</text>
<line x1="549.5" y1="332.3" x2="549.5" y2="418.1" stroke="#969696" stroke-width="1" opacity="1"/>
<line x1="549" y1="417.6" x2="712" y2="417.6" stroke="#969696" stroke-width="1" opacity="1"/>
<line x1="593.4" y1="413.1" x2="593.4" y2="417.6" stroke="#969696" stroke-width="1" opacity="1"/>
<text transform="translate(593 427) rotate(0.05) scale(0.9 1.0)" class="tk" text-anchor="middle">400</text>
<line x1="647.5" y1="415" x2="647.5" y2="417.6" stroke="#969696" stroke-width="1" opacity="0.75"/>
<text transform="translate(647.1 427) rotate(0.05) scale(0.9 1.0)" class="tk" text-anchor="middle">500</text>
<line x1="701.6" y1="413.1" x2="701.6" y2="417.6" stroke="#969696" stroke-width="1" opacity="1"/>
<text transform="translate(701.2 427) rotate(0.05) scale(0.9 1.0)" class="tk" text-anchor="middle">600</text>
<line x1="550.12" y1="415.6" x2="550.12" y2="417.6" stroke="#969696" stroke-width="1" opacity="0.5"/>
<line x1="560.94" y1="415.6" x2="560.94" y2="417.6" stroke="#969696" stroke-width="1" opacity="0.5"/>
<line x1="571.76" y1="415.6" x2="571.76" y2="417.6" stroke="#969696" stroke-width="1" opacity="0.5"/>
<line x1="582.58" y1="415.6" x2="582.58" y2="417.6" stroke="#969696" stroke-width="1" opacity="0.5"/>
<line x1="604.22" y1="415.6" x2="604.22" y2="417.6" stroke="#969696" stroke-width="1" opacity="0.5"/>
<line x1="615.04" y1="415.6" x2="615.04" y2="417.6" stroke="#969696" stroke-width="1" opacity="0.5"/>
<line x1="625.86" y1="415.6" x2="625.86" y2="417.6" stroke="#969696" stroke-width="1" opacity="0.5"/>
<line x1="636.68" y1="415.6" x2="636.68" y2="417.6" stroke="#969696" stroke-width="1" opacity="0.5"/>
<line x1="658.32" y1="415.6" x2="658.32" y2="417.6" stroke="#969696" stroke-width="1" opacity="0.5"/>
<line x1="669.14" y1="415.6" x2="669.14" y2="417.6" stroke="#969696" stroke-width="1" opacity="0.5"/>
<line x1="679.96" y1="415.6" x2="679.96" y2="417.6" stroke="#969696" stroke-width="1" opacity="0.5"/>
<line x1="690.78" y1="415.6" x2="690.78" y2="417.6" stroke="#969696" stroke-width="1" opacity="0.5"/>
<line x1="549.5" y1="339.9" x2="554" y2="339.9" stroke="#969696" stroke-width="1" opacity="1"/>
<text transform="translate(545.1 343) rotate(0.05) scale(0.9 1.0)" class="tk" text-anchor="end">1</text>
<line x1="549.5" y1="397.7" x2="554" y2="397.7" stroke="#969696" stroke-width="1" opacity="1"/>
<text transform="translate(545.1 400.8) rotate(0.05) scale(0.9 1.0)" class="tk" text-anchor="end">0</text>
<line x1="549.5" y1="409.26" x2="551.5" y2="409.26" stroke="#969696" stroke-width="1" opacity="0.4"/>
<line x1="549.5" y1="386.14" x2="551.5" y2="386.14" stroke="#969696" stroke-width="1" opacity="0.4"/>
<line x1="549.5" y1="374.58" x2="551.5" y2="374.58" stroke="#969696" stroke-width="1" opacity="0.4"/>
<line x1="549.5" y1="363.02" x2="551.5" y2="363.02" stroke="#969696" stroke-width="1" opacity="0.4"/>
<line x1="549.5" y1="351.46" x2="551.5" y2="351.46" stroke="#969696" stroke-width="1" opacity="0.4"/>
<polyline fill="none" stroke="#c8c8c8" stroke-width="1" points="549.36,399.28 549.58,399.3 550.12,399.28 550.66,399.19 551.2,399.05 551.74,398.85 552.28,398.6 552.82,398.31 553.37,397.99 553.91,397.66 554.45,397.33 554.99,397 555.53,396.71 556.07,396.44 556.61,396.23 557.15,396.07 557.69,395.97 558.24,395.95 558.78,395.99 559.32,396.1 559.86,396.28 560.4,396.52 560.94,396.81 561.48,397.13 562.02,397.49 562.56,397.86 563.1,398.22 563.64,398.57 564.19,398.89 564.73,399.17 565.27,399.39 565.81,399.54 566.35,399.62 566.89,399.63 567.43,399.56 567.97,399.41 568.51,399.2 569.05,398.92 569.6,398.58 570.14,398.21 570.68,397.81 571.22,397.4 571.76,397 572.3,396.62 572.84,396.27 573.38,395.98 573.92,395.76 574.46,395.61 575.01,395.54 575.55,395.56 576.09,395.66 576.63,395.85 577.17,396.11 577.71,396.44 578.25,396.83 578.79,397.26 579.33,397.72 579.88,398.18 580.42,398.63 580.96,399.05 581.5,399.42 582.04,399.73 582.58,399.96 583.12,400.1 583.66,400.16 584.2,400.11 584.74,399.96 585.28,399.72 585.83,399.4 586.37,399 586.91,398.54 587.45,398.04 587.99,397.52 588.53,396.99 589.07,396.48 589.61,396.02 590.15,395.61 590.69,395.28 591.24,395.04 591.78,394.9 592.32,394.87 592.86,394.96 593.4,395.15 593.94,395.46 594.48,395.86 595.02,396.35 595.56,396.89 596.11,397.49 596.65,398.1 597.19,398.71 597.73,399.3 598.27,399.83 598.81,400.29 599.35,400.65 599.89,400.91 600.43,401.04 600.97,401.03 601.51,400.9 602.06,400.63 602.6,400.23 603.14,399.72 603.68,399.12 604.22,398.45 604.76,397.73 605.3,396.99 605.84,396.26 606.38,395.56 606.92,394.94 607.47,394.41 608.01,394 608.55,393.73 609.09,393.61 609.63,393.65 610.17,393.86 610.71,394.23 611.25,394.75 611.79,395.41 612.34,396.18 612.88,397.04 613.42,397.95 613.96,398.88 614.5,399.79 615.04,400.65 615.58,401.42 616.12,402.07 616.66,402.56 617.2,402.87 617.75,402.98 618.29,402.88 618.83,402.56 619.37,402.04 619.91,401.32 620.45,400.42 620.99,399.37 621.53,398.21 622.07,396.98 622.61,395.73 623.15,394.5 623.7,393.34 624.24,392.31 624.78,391.45 625.32,390.8 625.86,390.4 626.4,390.28 626.94,390.46 627.48,390.94 628.02,391.73 628.56,392.81 629.11,394.16 629.65,395.73 630.19,397.49 630.73,399.37 631.27,401.31 631.81,403.23 632.35,405.07 632.89,406.74 633.43,408.16 633.98,409.27 634.52,409.99 635.06,410.26 635.6,410.03 636.14,409.26 636.68,407.92 637.22,406.02 637.76,403.54 638.3,400.52 638.84,396.98 639.38,392.99 639.93,388.61 640.47,383.92 641.01,379.02 641.55,373.99 642.09,368.96 642.63,364.02 643.17,359.3 643.71,354.89 644.25,350.89 644.79,347.41 645.34,344.52 645.88,342.28 646.42,340.76 646.96,340 647.5,340 648.04,340.76 648.58,342.28 649.12,344.52 649.66,347.41 650.2,350.89 650.75,354.89 651.29,359.3 651.83,364.02 652.37,368.96 652.91,373.99 653.45,379.02 653.99,383.92 654.53,388.61 655.07,392.99 655.62,396.98 656.16,400.52 656.7,403.54 657.24,406.02 657.78,407.92 658.32,409.26 658.86,410.03 659.4,410.26 659.94,409.99 660.48,409.27 661.02,408.16 661.57,406.74 662.11,405.07 662.65,403.23 663.19,401.31 663.73,399.37 664.27,397.49 664.81,395.73 665.35,394.16 665.89,392.81 666.43,391.73 666.98,390.94 667.52,390.46 668.06,390.28 668.6,390.4 669.14,390.8 669.68,391.45 670.22,392.31 670.76,393.34 671.3,394.5 671.85,395.73 672.39,396.98 672.93,398.21 673.47,399.37 674.01,400.42 674.55,401.32 675.09,402.04 675.63,402.56 676.17,402.88 676.71,402.98 677.25,402.87 677.8,402.56 678.34,402.07 678.88,401.42 679.42,400.65 679.96,399.79 680.5,398.88 681.04,397.95 681.58,397.04 682.12,396.18 682.66,395.41 683.21,394.75 683.75,394.23 684.29,393.86 684.83,393.65 685.37,393.61 685.91,393.73 686.45,394 686.99,394.41 687.53,394.94 688.08,395.56 688.62,396.26 689.16,396.99 689.7,397.73 690.24,398.45 690.78,399.12 691.32,399.72 691.86,400.23 692.4,400.63 692.94,400.9 693.49,401.03 694.03,401.04 694.57,400.91 695.11,400.65 695.65,400.29 696.19,399.83 696.73,399.3 697.27,398.71 697.81,398.1 698.35,397.49 698.89,396.89 699.44,396.35 699.98,395.86 700.52,395.46 701.06,395.15 701.6,394.96 702.14,394.87 702.68,394.9 703.22,395.04 703.76,395.28 704.3,395.61 704.85,396.02 705.39,396.48 705.93,396.99 706.47,397.52 707.01,398.04 707.55,398.54 708.09,399 708.63,399.4 709.17,399.72 709.72,399.96 710.26,400.11 710.8,400.16 711.34,400.1 711.88,399.96 711.88,399.96"/>
</svg>
</body>
</html>
